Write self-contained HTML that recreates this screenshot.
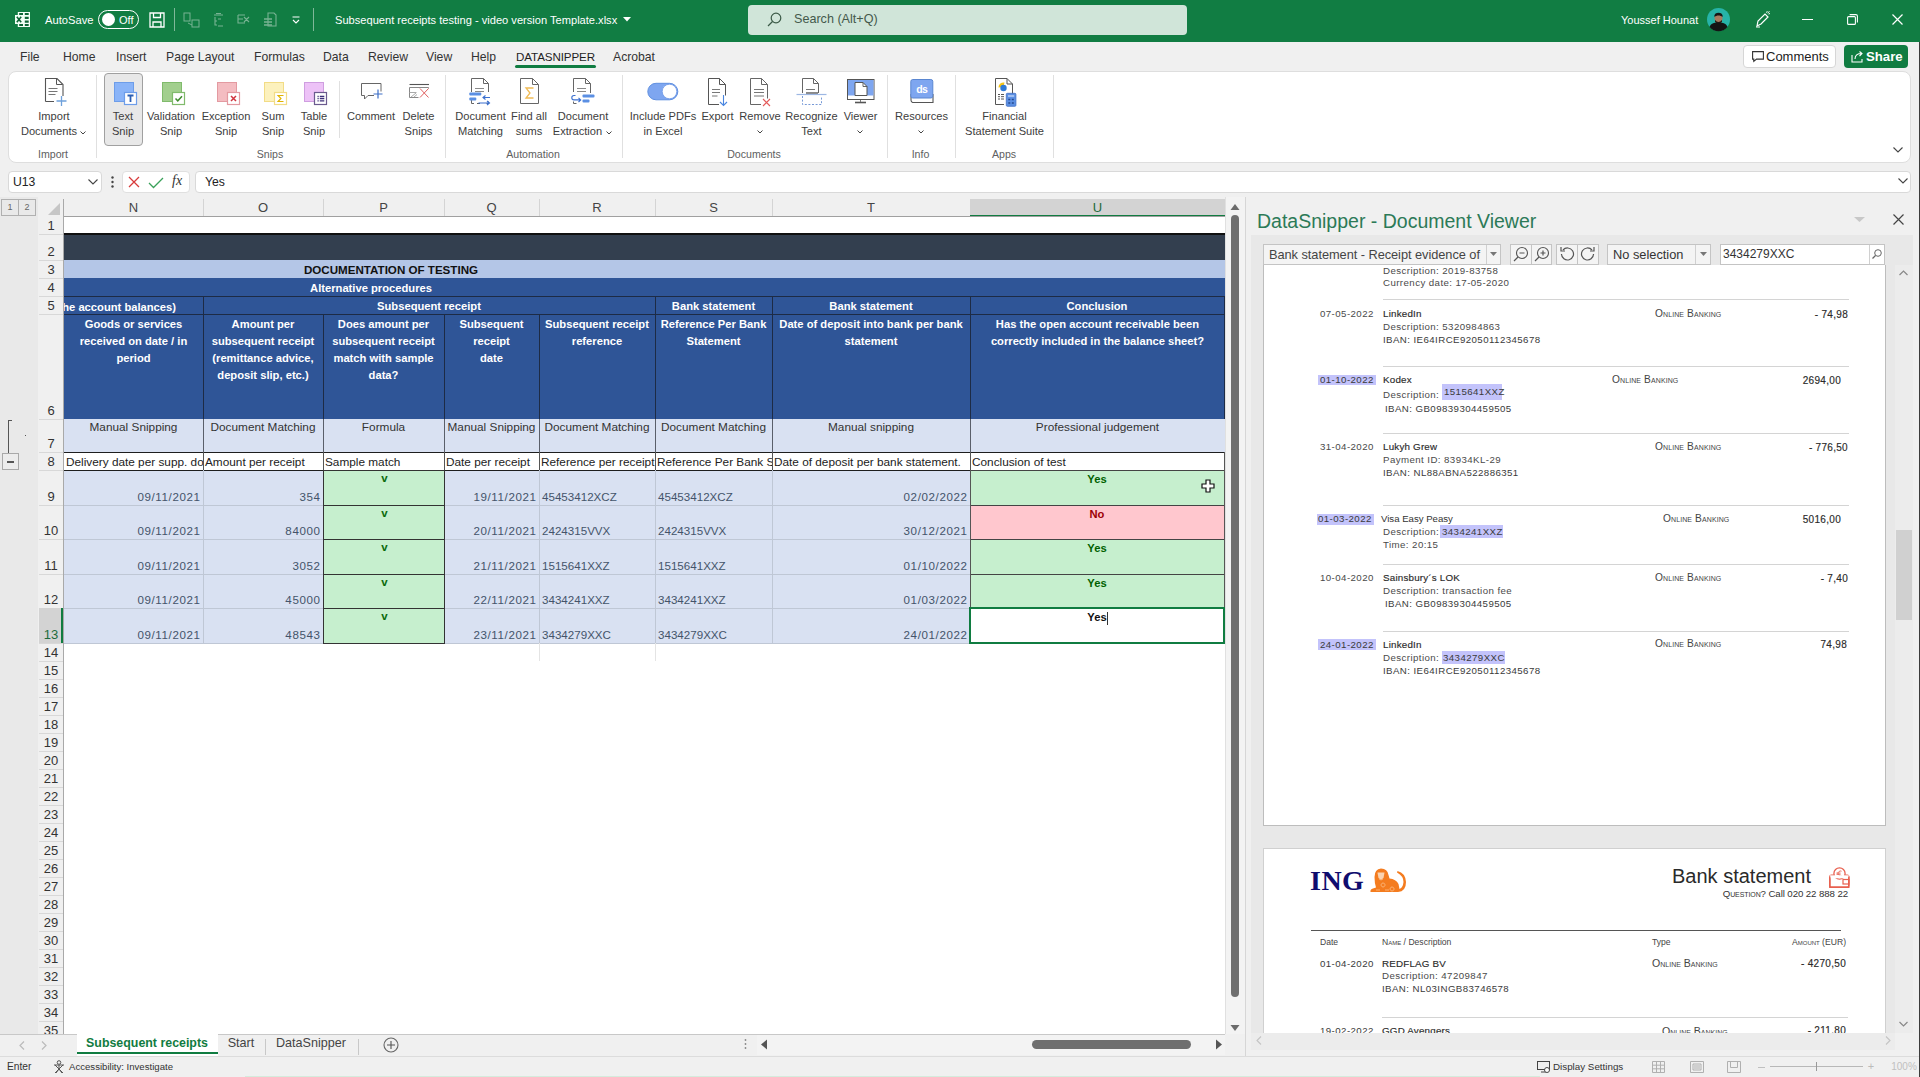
<!DOCTYPE html><html><head><meta charset="utf-8"><style>
*{margin:0;padding:0;box-sizing:border-box}
html,body{width:1920px;height:1077px;overflow:hidden;background:#f0f0f0;font-family:"Liberation Sans",sans-serif;color:#222}
.a{position:absolute}
.t{position:absolute;white-space:nowrap;line-height:1}
svg{position:absolute;overflow:visible}
</style></head><body>
<div class="a" style="left:0px;top:0px;width:1920px;height:42px;background:#117d43;"></div>
<svg style="left:14px;top:11px" width="17" height="17" viewBox="0 0 17 17"><rect x="3.8" y="1" width="12.2" height="15" fill="#f2fff6"/><path d="M5.2 3h3.8M10.8 3h3.9M10.8 6.8h3.9M10.8 10.6h3.9M5.2 14h3.8M10.8 14h3.9" stroke="#0d6536" stroke-width="2.2"/><path d="M1 4h9v9H1z" fill="#f2fff6"/><path d="M2.8 5.8l4.4 5.4M7.2 5.8l-4.4 5.4" stroke="#0d6536" stroke-width="1.6"/></svg>
<div class="t" style="left:45px;top:14.3px;height:13.4px;line-height:13.4px;font-size:11.2px;color:#fff;">AutoSave</div>
<div class="a" style="left:98px;top:10px;width:41px;height:19px;background:none;border:1.3px solid #fff;border-radius:10px"></div>
<div class="a" style="left:101.5px;top:13px;width:13px;height:13px;background:#fff;border-radius:50%"></div>
<div class="t" style="left:119px;top:13.9px;height:13.2px;line-height:13.2px;font-size:11px;color:#fff;">Off</div>
<svg style="left:149px;top:12px" width="16" height="16" viewBox="0 0 16 16"><path d="M1 1h14v14H1z" fill="none" stroke="#fff" stroke-width="1.3"/><path d="M4.5 1v4.5h7V1M4 15V10h8v5" fill="none" stroke="#fff" stroke-width="1.3"/></svg>
<div class="a" style="left:174px;top:8px;width:1px;height:23px;background:#7fb899;"></div>
<svg style="left:183px;top:12px" width="17" height="16" viewBox="0 0 17 16"><rect x="1" y="1" width="6" height="8" fill="none" stroke="#78b393"/><rect x="9" y="8" width="7" height="7" fill="none" stroke="#78b393"/><path d="M5 11l4 2" stroke="#78b393"/></svg>
<svg style="left:212px;top:12px" width="13" height="16" viewBox="0 0 13 16"><path d="M2 3h9M4 1.5h5M3 5v8h2M3 9h2M6 14h5M6 7h3" fill="none" stroke="#78b393" stroke-width="1.1"/></svg>
<svg style="left:237px;top:14px" width="13" height="10" viewBox="0 0 13 10"><path d="M1 1h7M1 1v8h7M1 5h5M7 3l5 5M12 3l-5 5" fill="none" stroke="#78b393" stroke-width="1.1"/></svg>
<svg style="left:263px;top:12px" width="14" height="16" viewBox="0 0 14 16"><path d="M5 1h6l2 2v11H5z" fill="none" stroke="#78b393" stroke-width="1.1"/><path d="M1 7h8M1 10h8M1 13h8" stroke="#78b393" stroke-width="1.6"/></svg>
<svg style="left:292px;top:16px" width="8" height="8" viewBox="0 0 8 8"><path d="M0.5 1h7M1 4l3 3 3-3" fill="none" stroke="#fff" stroke-width="1.1"/></svg>
<div class="a" style="left:313px;top:8px;width:1px;height:23px;background:#7fb899;"></div>
<div class="t" style="left:335px;top:14.3px;height:13.3px;line-height:13.3px;font-size:11.1px;color:#fff;">Subsequent receipts testing - video version Template.xlsx</div>
<svg style="left:623px;top:16.5px" width="8" height="5" viewBox="0 0 8 5"><path d="M0 0h8L4 4.5z" fill="#fff"/></svg>
<div class="a" style="left:748px;top:5px;width:439px;height:30px;background:#d0e5d9;border-radius:4px"></div>
<svg style="left:767px;top:12px" width="15" height="15" viewBox="0 0 15 15"><circle cx="9" cy="6" r="4.8" fill="none" stroke="#3b5a47" stroke-width="1.2"/><path d="M5.5 9.5L1 14" stroke="#3b5a47" stroke-width="1.3"/></svg>
<div class="t" style="left:794px;top:11.9px;height:15.1px;line-height:15.1px;font-size:12.6px;color:#44594b;">Search (Alt+Q)</div>
<div class="t" style="left:1621px;top:14.4px;height:13.2px;line-height:13.2px;font-size:11px;color:#fff;">Youssef Hounat</div>
<svg style="left:1707px;top:8px" width="23" height="23" viewBox="0 0 23 23"><circle cx="11.5" cy="11.5" r="11.5" fill="#27b3a8"/><ellipse cx="11.5" cy="10" rx="4" ry="5" fill="#a87a60"/><path d="M7.3 8c0-4.5 8.4-4.5 8.4 0l-.5 1c-1-2-6.4-2-7.4 0z" fill="#151515"/><path d="M8 12q3.5 4 7 0v2q-3.5 3-7 0z" fill="#2a1a14"/><path d="M2.5 19c1.5-3.5 4-4.5 9-4.5s7.5 1 9 4.5a11.5 11.5 0 0 1-18 0z" fill="#141414"/></svg>
<svg style="left:1755px;top:11px" width="16" height="17" viewBox="0 0 16 17"><path d="M2 15l1-5 7-7 3 3-7 7z" fill="none" stroke="#fff" stroke-width="1.2"/><path d="M1 16h4M11 1.5l1.5-1M13.5 3l1.5-.5M12.5 2l2-1.5" stroke="#fff" stroke-width="1"/></svg>
<div class="a" style="left:1802px;top:19px;width:11px;height:1px;background:#fff;"></div>
<svg style="left:1847px;top:14px" width="11" height="11" viewBox="0 0 11 11"><rect x="0.6" y="2.6" width="7.8" height="7.8" rx="1" fill="none" stroke="#fff" stroke-width="1.1"/><path d="M2.6 .6h6.3a1.5 1.5 0 0 1 1.5 1.5v6.3" fill="none" stroke="#fff" stroke-width="1.1"/></svg>
<svg style="left:1892px;top:14px" width="11" height="11" viewBox="0 0 11 11"><path d="M.5 .5l10 10M10.5 .5l-10 10" stroke="#fff" stroke-width="1.2"/></svg>
<div class="t" style="left:20px;top:49.7px;height:14.6px;line-height:14.6px;font-size:12.2px;color:#333;">File</div>
<div class="t" style="left:63px;top:49.7px;height:14.6px;line-height:14.6px;font-size:12.2px;color:#333;">Home</div>
<div class="t" style="left:116px;top:49.7px;height:14.6px;line-height:14.6px;font-size:12.2px;color:#333;">Insert</div>
<div class="t" style="left:166px;top:49.7px;height:14.6px;line-height:14.6px;font-size:12.2px;color:#333;">Page Layout</div>
<div class="t" style="left:254px;top:49.7px;height:14.6px;line-height:14.6px;font-size:12.2px;color:#333;">Formulas</div>
<div class="t" style="left:323px;top:49.7px;height:14.6px;line-height:14.6px;font-size:12.2px;color:#333;">Data</div>
<div class="t" style="left:368px;top:49.7px;height:14.6px;line-height:14.6px;font-size:12.2px;color:#333;">Review</div>
<div class="t" style="left:426px;top:49.7px;height:14.6px;line-height:14.6px;font-size:12.2px;color:#333;">View</div>
<div class="t" style="left:471px;top:49.7px;height:14.6px;line-height:14.6px;font-size:12.2px;color:#333;">Help</div>
<div class="t" style="left:516px;top:50.0px;height:13.9px;line-height:13.9px;font-size:11.6px;color:#1f1f1f;letter-spacing:-0.1px">DATASNIPPER</div>
<div class="a" style="left:515px;top:65px;width:81px;height:3px;background:#107c41;border-radius:2px"></div>
<div class="t" style="left:613px;top:49.7px;height:14.6px;line-height:14.6px;font-size:12.2px;color:#333;">Acrobat</div>
<div class="a" style="left:1743px;top:45px;width:93px;height:23px;background:#fff;border:1px solid #d6d6d6;border-radius:4px"></div>
<svg style="left:1752px;top:51px" width="12" height="11" viewBox="0 0 12 11"><path d="M.6.6h10.8v7.5H4.5L1.8 10.4V8.1H.6z" fill="none" stroke="#333" stroke-width="1.1"/></svg>
<div class="t" style="left:1766px;top:48.7px;height:15.6px;line-height:15.6px;font-size:13px;color:#222;">Comments</div>
<div class="a" style="left:1844px;top:45px;width:64px;height:23px;background:#107c41;border-radius:4px"></div>
<svg style="left:1851px;top:50px" width="13" height="13" viewBox="0 0 13 13"><path d="M1 5v7h10V9" fill="none" stroke="#fff" stroke-width="1.1"/><path d="M4 9c0-4 3-5.5 6.5-5.5M8.5 1.5l2.5 2-2.5 2.5" fill="none" stroke="#fff" stroke-width="1.1"/></svg>
<div class="t" style="left:1866px;top:48.6px;height:15.8px;line-height:15.8px;font-size:13.2px;color:#fff;font-weight:bold">Share</div>
<div class="a" style="left:8px;top:71px;width:1903px;height:92px;background:#fff;border:1px solid #dedede;border-radius:8px"></div>
<svg style="left:44px;top:78px" width="23" height="28" viewBox="0 0 23 28"><path d="M1.5 23.5V.5h11.5l6 6v11.5M1.5 23.5h8.5" fill="none" stroke="#555" stroke-width="1.1"/><path d="M12.5 .5v6h6" fill="none" stroke="#555" stroke-width="1"/><path d="M4.5 10.5h9M4.5 13.5h9M4.5 16.5h7" stroke="#777" stroke-width="1"/><path d="M17.5 18v10M12.5 23h10" stroke="#6fa1dc" stroke-width="1.3"/></svg>
<div class="t" style="left:-446px;width:1000px;text-align:center;top:110.3px;height:13.3px;line-height:13.3px;font-size:11.1px;color:#3d3d3d;">Import</div>
<div class="t" style="left:-451px;width:1000px;text-align:center;top:110.3px;height:13.3px;line-height:13.3px;font-size:11.1px;color:#3d3d3d;"></div>
<div class="t" style="left:-451px;width:1000px;text-align:center;top:125.3px;height:13.3px;line-height:13.3px;font-size:11.1px;color:#3d3d3d;">Documents</div>
<svg style="left:80px;top:131px" width="6" height="4" viewBox="0 0 6 4"><path d="M.5.5l2.5 2.5 2.5-2.5" fill="none" stroke="#444" stroke-width="1"/></svg>
<div class="t" style="left:-447px;width:1000px;text-align:center;top:148.1px;height:12.7px;line-height:12.7px;font-size:10.6px;color:#606060;">Import</div>
<div class="a" style="left:96px;top:75px;width:1px;height:83px;background:#e0e0e0;"></div>
<div class="a" style="left:104px;top:73px;width:39px;height:73px;background:#e8e8e8;border:1px solid #a0a0a0;border-radius:4px"></div>
<svg style="left:114px;top:82px" width="24" height="24" viewBox="0 0 24 24"><rect x=".5" y=".5" width="19" height="19" fill="#8ab4f8" stroke="#6d9de9" stroke-width="1"/><rect x="10.5" y="10.5" width="12" height="12" fill="#fff" stroke="#6d9de9" stroke-width="1.2"/><path d="M13.5 13.5h6M16.5 13.5v6.5" stroke="#2b5fb4" stroke-width="1.8"/></svg>
<div class="t" style="left:-377px;width:1000px;text-align:center;top:110.3px;height:13.3px;line-height:13.3px;font-size:11.1px;color:#3d3d3d;">Text</div>
<div class="t" style="left:-377px;width:1000px;text-align:center;top:125.3px;height:13.3px;line-height:13.3px;font-size:11.1px;color:#3d3d3d;">Snip</div>
<svg style="left:162px;top:82px" width="24" height="24" viewBox="0 0 24 24"><rect x=".5" y=".5" width="19" height="19" fill="#a2cf8e" stroke="#80bb6c" stroke-width="1"/><rect x="10.5" y="10.5" width="12" height="12" fill="#fff" stroke="#80bb6c" stroke-width="1.2"/><path d="M13.5 16.5l2.3 2.3 4.2-4.5" fill="none" stroke="#3f8b2d" stroke-width="1.5"/></svg>
<div class="t" style="left:-329px;width:1000px;text-align:center;top:110.3px;height:13.3px;line-height:13.3px;font-size:11.1px;color:#3d3d3d;">Validation</div>
<div class="t" style="left:-329px;width:1000px;text-align:center;top:125.3px;height:13.3px;line-height:13.3px;font-size:11.1px;color:#3d3d3d;">Snip</div>
<svg style="left:217px;top:82px" width="24" height="24" viewBox="0 0 24 24"><rect x=".5" y=".5" width="19" height="19" fill="#f4bcc1" stroke="#e39aa1" stroke-width="1"/><rect x="10.5" y="10.5" width="12" height="12" fill="#fff" stroke="#e39aa1" stroke-width="1.2"/><path d="M14 14l5 5M19 14l-5 5" stroke="#d0343f" stroke-width="1.5"/></svg>
<div class="t" style="left:-274px;width:1000px;text-align:center;top:110.3px;height:13.3px;line-height:13.3px;font-size:11.1px;color:#3d3d3d;">Exception</div>
<div class="t" style="left:-274px;width:1000px;text-align:center;top:125.3px;height:13.3px;line-height:13.3px;font-size:11.1px;color:#3d3d3d;">Snip</div>
<svg style="left:264px;top:82px" width="24" height="24" viewBox="0 0 24 24"><rect x=".5" y=".5" width="19" height="19" fill="#fcf1bd" stroke="#f2dc86" stroke-width="1"/><rect x="10.5" y="10.5" width="12" height="12" fill="#fff" stroke="#f2dc86" stroke-width="1.2"/><path d="M19.5 13.5h-5.5l3 3-3 3h5.5" fill="none" stroke="#e0b400" stroke-width="1.1"/></svg>
<div class="t" style="left:-227px;width:1000px;text-align:center;top:110.3px;height:13.3px;line-height:13.3px;font-size:11.1px;color:#3d3d3d;">Sum</div>
<div class="t" style="left:-227px;width:1000px;text-align:center;top:125.3px;height:13.3px;line-height:13.3px;font-size:11.1px;color:#3d3d3d;">Snip</div>
<svg style="left:304px;top:82px" width="24" height="24" viewBox="0 0 24 24"><rect x=".5" y=".5" width="19" height="19" fill="#edc2f7" stroke="#cf9ee0" stroke-width="1"/><rect x="10.5" y="10.5" width="12" height="12" fill="#fff" stroke="#6b5a8e" stroke-width="1.2"/><path d="M13.5 14.5h1.2M15.8 14.5h4.5M13.5 16.7h1.2M15.8 16.7h4.5M13.5 18.9h1.2M15.8 18.9h4.5" stroke="#3e2f7a" stroke-width="1.3"/></svg>
<div class="t" style="left:-186px;width:1000px;text-align:center;top:110.3px;height:13.3px;line-height:13.3px;font-size:11.1px;color:#3d3d3d;">Table</div>
<div class="t" style="left:-186px;width:1000px;text-align:center;top:125.3px;height:13.3px;line-height:13.3px;font-size:11.1px;color:#3d3d3d;">Snip</div>
<div class="t" style="left:-230px;width:1000px;text-align:center;top:148.1px;height:12.7px;line-height:12.7px;font-size:10.6px;color:#606060;">Snips</div>
<div class="a" style="left:339px;top:81px;width:1px;height:57px;background:#e0e0e0;"></div>
<svg style="left:361px;top:83px" width="23" height="17" viewBox="0 0 23 17"><path d="M13 12.5H7l-3.5 3.5v-3.5H.5V.5h19.5v8" fill="none" stroke="#666" stroke-width="1"/><path d="M17 6.5v9M12.5 11h9" stroke="#3d6fc8" stroke-width="1.2"/></svg>
<div class="t" style="left:-129px;width:1000px;text-align:center;top:110.3px;height:13.3px;line-height:13.3px;font-size:11.1px;color:#3d3d3d;">Comment</div>
<svg style="left:409px;top:83px" width="21" height="16" viewBox="0 0 21 16"><path d="M.5 1.5h19.5" stroke="#555" stroke-width="1.1"/><path d="M.5 4.5h19v1M.5 4.5v10h9" fill="none" stroke="#888" stroke-width="1"/><path d="M.5 9.5h7M2 14l5-4M5 14l3-2.5" stroke="#aaa" stroke-width="1"/><path d="M11 5.5l8.5 9M19.5 5.5l-8.5 9" stroke="#e06060" stroke-width="1"/></svg>
<div class="t" style="left:-81.5px;width:1000px;text-align:center;top:110.3px;height:13.3px;line-height:13.3px;font-size:11.1px;color:#3d3d3d;">Delete</div>
<div class="t" style="left:-81.5px;width:1000px;text-align:center;top:125.3px;height:13.3px;line-height:13.3px;font-size:11.1px;color:#3d3d3d;">Snips</div>
<div class="a" style="left:445px;top:75px;width:1px;height:83px;background:#e0e0e0;"></div>
<svg style="left:469px;top:78px" width="22" height="27" viewBox="0 0 22 27"><path d="M2.5 14V.5h12l5 5V14M19.5 23.5v2h-2M2.5 22v3.5h2.5M8 25.5h3" fill="none" stroke="#666" stroke-width="1"/><path d="M14.5 .5v5h5" fill="none" stroke="#666" stroke-width="1"/><path d="M6 10.5h9M6 13.5h9" stroke="#8a8a8a" stroke-width="1"/><rect x=".3" y="14.5" width="12" height="3" rx="1" fill="#5b8fe3"/><rect x=".3" y="19.5" width="7" height="3" rx="1" fill="#5b8fe3"/><path d="M21 19.5h-7M16.5 17.5l-2.5 2 2.5 2M9.5 25h11M18 23l2.5 2-2.5 2" fill="none" stroke="#3a6fcf" stroke-width="1.1"/></svg>
<div class="t" style="left:-19.5px;width:1000px;text-align:center;top:110.3px;height:13.3px;line-height:13.3px;font-size:11.1px;color:#3d3d3d;">Document</div>
<div class="t" style="left:-19.5px;width:1000px;text-align:center;top:125.3px;height:13.3px;line-height:13.3px;font-size:11.1px;color:#3d3d3d;">Matching</div>
<svg style="left:519px;top:78px" width="21" height="27" viewBox="0 0 21 27"><path d="M1.5 25.5V.5h12l6 6v19z M13.5 .5v6h6" fill="#fff" stroke="#666" stroke-width="1"/><path d="M14.5 10h-7.5l4 5-4 5h7.5" fill="none" stroke="#f0bb55" stroke-width="1.3"/></svg>
<div class="t" style="left:29px;width:1000px;text-align:center;top:110.3px;height:13.3px;line-height:13.3px;font-size:11.1px;color:#3d3d3d;">Find all</div>
<div class="t" style="left:29px;width:1000px;text-align:center;top:125.3px;height:13.3px;line-height:13.3px;font-size:11.1px;color:#3d3d3d;">sums</div>
<svg style="left:571px;top:78px" width="25" height="27" viewBox="0 0 25 27"><path d="M2.5 14V.5h12l5 5V15M2.5 23.5v2h3" fill="none" stroke="#666" stroke-width="1"/><path d="M14.5 .5v5h5" fill="none" stroke="#666" stroke-width="1"/><path d="M6 10.5h9M6 13.5h9" stroke="#8a8a8a" stroke-width="1"/><rect x="11.5" y="16.5" width="12" height="3" rx="1" fill="#5b8fe3"/><rect x="11.5" y="21.5" width="7" height="3" rx="1" fill="#5b8fe3"/><path d="M4.5 17.5h-1.5a2.2 2.2 0 0 0 0 4.4h6.5M7.5 19.8l2.2 2.1-2.2 2.1" fill="none" stroke="#3a6fcf" stroke-width="1.1"/></svg>
<div class="t" style="left:83px;width:1000px;text-align:center;top:110.3px;height:13.3px;line-height:13.3px;font-size:11.1px;color:#3d3d3d;">Document</div>
<div class="t" style="left:77.5px;width:1000px;text-align:center;top:110.3px;height:13.3px;line-height:13.3px;font-size:11.1px;color:#3d3d3d;"></div>
<div class="t" style="left:77.5px;width:1000px;text-align:center;top:125.3px;height:13.3px;line-height:13.3px;font-size:11.1px;color:#3d3d3d;">Extraction</div>
<svg style="left:606px;top:131px" width="6" height="4" viewBox="0 0 6 4"><path d="M.5.5l2.5 2.5 2.5-2.5" fill="none" stroke="#444" stroke-width="1"/></svg>
<div class="t" style="left:33px;width:1000px;text-align:center;top:148.1px;height:12.7px;line-height:12.7px;font-size:10.6px;color:#606060;">Automation</div>
<div class="a" style="left:622px;top:75px;width:1px;height:83px;background:#e0e0e0;"></div>
<svg style="left:647px;top:82px" width="32" height="19" viewBox="0 0 32 19"><rect x=".8" y="1.3" width="30" height="16.5" rx="8.25" fill="#7ea6f0" stroke="#5f8fe0" stroke-width="1"/><circle cx="22.5" cy="9.5" r="7.3" fill="#fff" stroke="#6d98e6" stroke-width=".8"/></svg>
<div class="t" style="left:163px;width:1000px;text-align:center;top:110.3px;height:13.3px;line-height:13.3px;font-size:11.1px;color:#3d3d3d;">Include PDFs</div>
<div class="t" style="left:163px;width:1000px;text-align:center;top:125.3px;height:13.3px;line-height:13.3px;font-size:11.1px;color:#3d3d3d;">in Excel</div>
<svg style="left:707px;top:78px" width="22" height="29" viewBox="0 0 22 29"><path d="M12 26.5H1.5V.5h11l6 6v11" fill="none" stroke="#555" stroke-width="1"/><path d="M12.5 .5v6h6" fill="none" stroke="#555" stroke-width="1"/><path d="M5 11.5h8M5 14.5h8M5 18h5.5" stroke="#777" stroke-width="1"/><path d="M16.5 17v10.5M13 24l3.5 3.5 3.5-3.5" fill="none" stroke="#4a86e0" stroke-width="1.1"/></svg>
<div class="t" style="left:217.5px;width:1000px;text-align:center;top:110.3px;height:13.3px;line-height:13.3px;font-size:11.1px;color:#3d3d3d;">Export</div>
<svg style="left:749px;top:78px" width="23" height="29" viewBox="0 0 23 29"><path d="M12 26.5H1.5V.5h11l6 6v14" fill="none" stroke="#666" stroke-width="1"/><path d="M12.5 .5v6h6" fill="none" stroke="#666" stroke-width="1"/><path d="M5 11.5h10M5 14.5h10M5 18h10" stroke="#777" stroke-width="1"/><path d="M14 21l7 7M21 21l-7 7" stroke="#e45b5b" stroke-width="1.1"/></svg>
<div class="t" style="left:260px;width:1000px;text-align:center;top:110.3px;height:13.3px;line-height:13.3px;font-size:11.1px;color:#3d3d3d;">Remove</div>
<svg style="left:757px;top:130px" width="6" height="4" viewBox="0 0 6 4"><path d="M.5.5l2.5 2.5 2.5-2.5" fill="none" stroke="#444" stroke-width="1"/></svg>
<svg style="left:796px;top:78px" width="32" height="28" viewBox="0 0 32 28"><path d="M6.5 15V.5h11l5 5V15" fill="none" stroke="#666" stroke-width="1"/><path d="M17.5 .5v5h5" fill="none" stroke="#666" stroke-width="1"/><path d="M10 11.5h9" stroke="#777" stroke-width="1"/><rect x="10" y="14" width="12" height="2" fill="#8a8a8a"/><path d="M.5 16.5h30" stroke="#9db7e3" stroke-width="1.2"/><path d="M6.5 18v8.5h19V18" fill="none" stroke="#7799d6" stroke-width="1" stroke-dasharray="2 1.6"/></svg>
<div class="t" style="left:311.5px;width:1000px;text-align:center;top:110.3px;height:13.3px;line-height:13.3px;font-size:11.1px;color:#3d3d3d;">Recognize</div>
<div class="t" style="left:311.5px;width:1000px;text-align:center;top:125.3px;height:13.3px;line-height:13.3px;font-size:11.1px;color:#3d3d3d;">Text</div>
<svg style="left:847px;top:79px" width="28" height="26" viewBox="0 0 28 26"><rect x=".5" y=".5" width="26.5" height="20" fill="#fff" stroke="#555" stroke-width="1"/><rect x="1" y="1" width="25.5" height="15.5" fill="#7ea6f0"/><path d="M8 3.5h8l4 4v9H8z" fill="#fff" stroke="#555" stroke-width="1"/><path d="M16 3.5v4h4" fill="none" stroke="#555" stroke-width=".9"/><path d="M8 23.5h11" stroke="#555" stroke-width="1.6"/><path d="M13.5 21v2" stroke="#777" stroke-width="1"/></svg>
<div class="t" style="left:360.5px;width:1000px;text-align:center;top:110.3px;height:13.3px;line-height:13.3px;font-size:11.1px;color:#3d3d3d;">Viewer</div>
<svg style="left:857px;top:130px" width="6" height="4" viewBox="0 0 6 4"><path d="M.5.5l2.5 2.5 2.5-2.5" fill="none" stroke="#444" stroke-width="1"/></svg>
<div class="t" style="left:254px;width:1000px;text-align:center;top:148.1px;height:12.7px;line-height:12.7px;font-size:10.6px;color:#606060;">Documents</div>
<div class="a" style="left:887px;top:75px;width:1px;height:83px;background:#e0e0e0;"></div>
<svg style="left:910px;top:79px" width="24" height="25" viewBox="0 0 24 25"><path d="M1 15v6a2.5 2.5 0 0 0 2.5 2.5h19.5V15" fill="#fff" stroke="#555" stroke-width="1.1"/><rect x=".8" y=".5" width="22" height="18.5" rx="2" fill="#7ea6f0" stroke="#5a86d0" stroke-width="1"/><text x="11.8" y="13.5" font-size="10.5" fill="#fff" text-anchor="middle" font-family="Liberation Sans" font-weight="bold" letter-spacing="-.5">ds</text></svg>
<div class="t" style="left:421.5px;width:1000px;text-align:center;top:110.3px;height:13.3px;line-height:13.3px;font-size:11.1px;color:#3d3d3d;">Resources</div>
<svg style="left:918px;top:130px" width="6" height="4" viewBox="0 0 6 4"><path d="M.5.5l2.5 2.5 2.5-2.5" fill="none" stroke="#444" stroke-width="1"/></svg>
<div class="t" style="left:420.5px;width:1000px;text-align:center;top:148.1px;height:12.7px;line-height:12.7px;font-size:10.6px;color:#606060;">Info</div>
<div class="a" style="left:955px;top:75px;width:1px;height:83px;background:#e0e0e0;"></div>
<svg style="left:994px;top:78px" width="23" height="29" viewBox="0 0 23 29"><path d="M10 26.5H1.5V.5h11.5l5.5 5.5v10.5M13 .5v5.5h5.5" fill="#fff" stroke="#555" stroke-width="1"/><path d="M4.5 9.5a5 5 0 0 1 6-5l-1 4.5z" fill="#f5c518"/><circle cx="9.5" cy="10" r="3.2" fill="#2f7ad6"/><path d="M4 16.5h2M7 16.5h3M4 18.7h2M7 18.7h3M4 21h2M7 21h3" stroke="#555" stroke-width="1"/><rect x="12.3" y="15.3" width="9.6" height="13" rx="1" fill="#5b8fe3" stroke="#3f6fc4" stroke-width=".8"/><path d="M14 18h6.2" stroke="#cfe0fb" stroke-width="1.2"/><path d="M14.3 21.5h2M17.8 21.5h2M14.3 25h2M17.8 25h2" stroke="#24498f" stroke-width="1.4"/></svg>
<div class="t" style="left:504.5px;width:1000px;text-align:center;top:110.3px;height:13.3px;line-height:13.3px;font-size:11.1px;color:#3d3d3d;">Financial</div>
<div class="t" style="left:504.5px;width:1000px;text-align:center;top:125.3px;height:13.3px;line-height:13.3px;font-size:11.1px;color:#3d3d3d;">Statement Suite</div>
<div class="t" style="left:504px;width:1000px;text-align:center;top:148.1px;height:12.7px;line-height:12.7px;font-size:10.6px;color:#606060;">Apps</div>
<div class="a" style="left:1053px;top:75px;width:1px;height:83px;background:#e0e0e0;"></div>
<svg style="left:1893px;top:147px" width="10" height="6" viewBox="0 0 10 6"><path d="M.5.5l4.5 4.5 4.5-4.5" fill="none" stroke="#444" stroke-width="1.1"/></svg>
<div class="a" style="left:8px;top:171px;width:94px;height:22px;background:#fff;border:1px solid #d9d9d9;border-radius:4px"></div>
<div class="t" style="left:13px;top:174.7px;height:14.6px;line-height:14.6px;font-size:12.2px;color:#222;">U13</div>
<svg style="left:88px;top:179px" width="10" height="6" viewBox="0 0 10 6"><path d="M.5.5l4.5 4.5 4.5-4.5" fill="none" stroke="#444" stroke-width="1.1"/></svg>
<svg style="left:111px;top:176px" width="3" height="12" viewBox="0 0 3 12"><circle cx="1.5" cy="1.5" r="1.2" fill="#444"/><circle cx="1.5" cy="6" r="1.2" fill="#444"/><circle cx="1.5" cy="10.5" r="1.2" fill="#444"/></svg>
<div class="a" style="left:122px;top:171px;width:68px;height:22px;background:#fff;border:1px solid #e0e0e0;border-radius:4px"></div>
<svg style="left:128px;top:176px" width="12" height="12" viewBox="0 0 12 12"><path d="M1 1l10 10M11 1L1 11" stroke="#d83b3b" stroke-width="1.3"/></svg>
<svg style="left:148px;top:177px" width="16" height="11" viewBox="0 0 16 11"><path d="M1 6l4.5 4.5L15 1" fill="none" stroke="#3aa15a" stroke-width="1.3"/></svg>
<div class="t" style="left:172px;top:173.1px;height:16.8px;line-height:16.8px;font-size:14px;color:#333;font-family:'Liberation Serif',serif"><i>fx</i></div>
<div class="a" style="left:195px;top:171px;width:1716px;height:22px;background:#fff;border:1px solid #d9d9d9;border-radius:4px"></div>
<div class="t" style="left:205px;top:174.7px;height:14.6px;line-height:14.6px;font-size:12.2px;color:#222;">Yes</div>
<svg style="left:1898px;top:178px" width="10" height="6" viewBox="0 0 10 6"><path d="M.5.5l4.5 4.5 4.5-4.5" fill="none" stroke="#444" stroke-width="1.1"/></svg>
<div class="a" style="left:64px;top:216px;width:1161px;height:818px;background:#fff;"></div>
<div class="a" style="left:39px;top:197px;width:1186px;height:19px;background:#f0f0f0;"></div>
<div class="t" style="left:-366.5px;width:1000px;text-align:center;top:199.7px;height:15.6px;line-height:15.6px;font-size:13px;color:#444;">N</div>
<div class="a" style="left:203px;top:199px;width:1px;height:17px;background:#d4d4d4;"></div>
<div class="t" style="left:-237.0px;width:1000px;text-align:center;top:199.7px;height:15.6px;line-height:15.6px;font-size:13px;color:#444;">O</div>
<div class="a" style="left:323px;top:199px;width:1px;height:17px;background:#d4d4d4;"></div>
<div class="t" style="left:-116.5px;width:1000px;text-align:center;top:199.7px;height:15.6px;line-height:15.6px;font-size:13px;color:#444;">P</div>
<div class="a" style="left:444px;top:199px;width:1px;height:17px;background:#d4d4d4;"></div>
<div class="t" style="left:-8.5px;width:1000px;text-align:center;top:199.7px;height:15.6px;line-height:15.6px;font-size:13px;color:#444;">Q</div>
<div class="a" style="left:539px;top:199px;width:1px;height:17px;background:#d4d4d4;"></div>
<div class="t" style="left:97.0px;width:1000px;text-align:center;top:199.7px;height:15.6px;line-height:15.6px;font-size:13px;color:#444;">R</div>
<div class="a" style="left:655px;top:199px;width:1px;height:17px;background:#d4d4d4;"></div>
<div class="t" style="left:213.5px;width:1000px;text-align:center;top:199.7px;height:15.6px;line-height:15.6px;font-size:13px;color:#444;">S</div>
<div class="a" style="left:772px;top:199px;width:1px;height:17px;background:#d4d4d4;"></div>
<div class="t" style="left:371.0px;width:1000px;text-align:center;top:199.7px;height:15.6px;line-height:15.6px;font-size:13px;color:#444;">T</div>
<div class="a" style="left:970px;top:199px;width:1px;height:17px;background:#d4d4d4;"></div>
<div class="a" style="left:970px;top:199px;width:255px;height:17px;background:#d3d3d3;"></div>
<div class="a" style="left:970px;top:215px;width:255px;height:2px;background:#107c41;"></div>
<div class="t" style="left:597.5px;width:1000px;text-align:center;top:199.7px;height:15.6px;line-height:15.6px;font-size:13px;color:#1e6b3c;">U</div>
<div class="a" style="left:1225px;top:199px;width:1px;height:17px;background:#d4d4d4;"></div>
<div class="a" style="left:39px;top:216px;width:1186px;height:1px;background:#a0a0a0;"></div>
<svg style="left:48px;top:203px" width="12" height="12" viewBox="0 0 12 12"><path d="M12 0v12H0z" fill="#c6c6c6"/></svg>
<div class="a" style="left:39px;top:216px;width:25px;height:818px;background:#f0f0f0;"></div>
<div class="a" style="left:63px;top:199px;width:1px;height:835px;background:#a9a9a9;"></div>
<div class="a" style="left:39px;top:234px;width:24px;height:1px;background:#d8d8d8;"></div>
<div class="t" style="left:-449px;width:1000px;text-align:center;top:217.7px;height:15.6px;line-height:15.6px;font-size:13px;color:#333;">1</div>
<div class="a" style="left:39px;top:260px;width:24px;height:1px;background:#d8d8d8;"></div>
<div class="t" style="left:-449px;width:1000px;text-align:center;top:243.7px;height:15.6px;line-height:15.6px;font-size:13px;color:#333;">2</div>
<div class="a" style="left:39px;top:278px;width:24px;height:1px;background:#d8d8d8;"></div>
<div class="t" style="left:-449px;width:1000px;text-align:center;top:261.7px;height:15.6px;line-height:15.6px;font-size:13px;color:#333;">3</div>
<div class="a" style="left:39px;top:296px;width:24px;height:1px;background:#d8d8d8;"></div>
<div class="t" style="left:-449px;width:1000px;text-align:center;top:279.7px;height:15.6px;line-height:15.6px;font-size:13px;color:#333;">4</div>
<div class="a" style="left:39px;top:314px;width:24px;height:1px;background:#d8d8d8;"></div>
<div class="t" style="left:-449px;width:1000px;text-align:center;top:297.7px;height:15.6px;line-height:15.6px;font-size:13px;color:#333;">5</div>
<div class="a" style="left:39px;top:419px;width:24px;height:1px;background:#d8d8d8;"></div>
<div class="t" style="left:-449px;width:1000px;text-align:center;top:402.7px;height:15.6px;line-height:15.6px;font-size:13px;color:#333;">6</div>
<div class="a" style="left:39px;top:452px;width:24px;height:1px;background:#d8d8d8;"></div>
<div class="t" style="left:-449px;width:1000px;text-align:center;top:435.7px;height:15.6px;line-height:15.6px;font-size:13px;color:#333;">7</div>
<div class="a" style="left:39px;top:470px;width:24px;height:1px;background:#d8d8d8;"></div>
<div class="t" style="left:-449px;width:1000px;text-align:center;top:453.7px;height:15.6px;line-height:15.6px;font-size:13px;color:#333;">8</div>
<div class="a" style="left:39px;top:505px;width:24px;height:1px;background:#d8d8d8;"></div>
<div class="t" style="left:-449px;width:1000px;text-align:center;top:488.7px;height:15.6px;line-height:15.6px;font-size:13px;color:#333;">9</div>
<div class="a" style="left:39px;top:539px;width:24px;height:1px;background:#d8d8d8;"></div>
<div class="t" style="left:-449px;width:1000px;text-align:center;top:522.7px;height:15.6px;line-height:15.6px;font-size:13px;color:#333;">10</div>
<div class="a" style="left:39px;top:574px;width:24px;height:1px;background:#d8d8d8;"></div>
<div class="t" style="left:-449px;width:1000px;text-align:center;top:557.7px;height:15.6px;line-height:15.6px;font-size:13px;color:#333;">11</div>
<div class="a" style="left:39px;top:608px;width:24px;height:1px;background:#d8d8d8;"></div>
<div class="t" style="left:-449px;width:1000px;text-align:center;top:591.7px;height:15.6px;line-height:15.6px;font-size:13px;color:#333;">12</div>
<div class="a" style="left:39px;top:608px;width:24px;height:35px;background:#d3d3d3;"></div>
<div class="a" style="left:61px;top:608px;width:2px;height:35px;background:#107c41;"></div>
<div class="a" style="left:39px;top:643px;width:24px;height:1px;background:#d8d8d8;"></div>
<div class="t" style="left:-449px;width:1000px;text-align:center;top:626.7px;height:15.6px;line-height:15.6px;font-size:13px;color:#1e6b3c;">13</div>
<div class="a" style="left:39px;top:661px;width:24px;height:1px;background:#d8d8d8;"></div>
<div class="t" style="left:-449px;width:1000px;text-align:center;top:644.7px;height:15.6px;line-height:15.6px;font-size:13px;color:#333;">14</div>
<div class="a" style="left:39px;top:679px;width:24px;height:1px;background:#d8d8d8;"></div>
<div class="t" style="left:-449px;width:1000px;text-align:center;top:662.7px;height:15.6px;line-height:15.6px;font-size:13px;color:#333;">15</div>
<div class="a" style="left:39px;top:697px;width:24px;height:1px;background:#d8d8d8;"></div>
<div class="t" style="left:-449px;width:1000px;text-align:center;top:680.7px;height:15.6px;line-height:15.6px;font-size:13px;color:#333;">16</div>
<div class="a" style="left:39px;top:715px;width:24px;height:1px;background:#d8d8d8;"></div>
<div class="t" style="left:-449px;width:1000px;text-align:center;top:698.7px;height:15.6px;line-height:15.6px;font-size:13px;color:#333;">17</div>
<div class="a" style="left:39px;top:733px;width:24px;height:1px;background:#d8d8d8;"></div>
<div class="t" style="left:-449px;width:1000px;text-align:center;top:716.7px;height:15.6px;line-height:15.6px;font-size:13px;color:#333;">18</div>
<div class="a" style="left:39px;top:751px;width:24px;height:1px;background:#d8d8d8;"></div>
<div class="t" style="left:-449px;width:1000px;text-align:center;top:734.7px;height:15.6px;line-height:15.6px;font-size:13px;color:#333;">19</div>
<div class="a" style="left:39px;top:769px;width:24px;height:1px;background:#d8d8d8;"></div>
<div class="t" style="left:-449px;width:1000px;text-align:center;top:752.7px;height:15.6px;line-height:15.6px;font-size:13px;color:#333;">20</div>
<div class="a" style="left:39px;top:787px;width:24px;height:1px;background:#d8d8d8;"></div>
<div class="t" style="left:-449px;width:1000px;text-align:center;top:770.7px;height:15.6px;line-height:15.6px;font-size:13px;color:#333;">21</div>
<div class="a" style="left:39px;top:805px;width:24px;height:1px;background:#d8d8d8;"></div>
<div class="t" style="left:-449px;width:1000px;text-align:center;top:788.7px;height:15.6px;line-height:15.6px;font-size:13px;color:#333;">22</div>
<div class="a" style="left:39px;top:823px;width:24px;height:1px;background:#d8d8d8;"></div>
<div class="t" style="left:-449px;width:1000px;text-align:center;top:806.7px;height:15.6px;line-height:15.6px;font-size:13px;color:#333;">23</div>
<div class="a" style="left:39px;top:841px;width:24px;height:1px;background:#d8d8d8;"></div>
<div class="t" style="left:-449px;width:1000px;text-align:center;top:824.7px;height:15.6px;line-height:15.6px;font-size:13px;color:#333;">24</div>
<div class="a" style="left:39px;top:859px;width:24px;height:1px;background:#d8d8d8;"></div>
<div class="t" style="left:-449px;width:1000px;text-align:center;top:842.7px;height:15.6px;line-height:15.6px;font-size:13px;color:#333;">25</div>
<div class="a" style="left:39px;top:877px;width:24px;height:1px;background:#d8d8d8;"></div>
<div class="t" style="left:-449px;width:1000px;text-align:center;top:860.7px;height:15.6px;line-height:15.6px;font-size:13px;color:#333;">26</div>
<div class="a" style="left:39px;top:895px;width:24px;height:1px;background:#d8d8d8;"></div>
<div class="t" style="left:-449px;width:1000px;text-align:center;top:878.7px;height:15.6px;line-height:15.6px;font-size:13px;color:#333;">27</div>
<div class="a" style="left:39px;top:913px;width:24px;height:1px;background:#d8d8d8;"></div>
<div class="t" style="left:-449px;width:1000px;text-align:center;top:896.7px;height:15.6px;line-height:15.6px;font-size:13px;color:#333;">28</div>
<div class="a" style="left:39px;top:931px;width:24px;height:1px;background:#d8d8d8;"></div>
<div class="t" style="left:-449px;width:1000px;text-align:center;top:914.7px;height:15.6px;line-height:15.6px;font-size:13px;color:#333;">29</div>
<div class="a" style="left:39px;top:949px;width:24px;height:1px;background:#d8d8d8;"></div>
<div class="t" style="left:-449px;width:1000px;text-align:center;top:932.7px;height:15.6px;line-height:15.6px;font-size:13px;color:#333;">30</div>
<div class="a" style="left:39px;top:967px;width:24px;height:1px;background:#d8d8d8;"></div>
<div class="t" style="left:-449px;width:1000px;text-align:center;top:950.7px;height:15.6px;line-height:15.6px;font-size:13px;color:#333;">31</div>
<div class="a" style="left:39px;top:985px;width:24px;height:1px;background:#d8d8d8;"></div>
<div class="t" style="left:-449px;width:1000px;text-align:center;top:968.7px;height:15.6px;line-height:15.6px;font-size:13px;color:#333;">32</div>
<div class="a" style="left:39px;top:1003px;width:24px;height:1px;background:#d8d8d8;"></div>
<div class="t" style="left:-449px;width:1000px;text-align:center;top:986.7px;height:15.6px;line-height:15.6px;font-size:13px;color:#333;">33</div>
<div class="a" style="left:39px;top:1021px;width:24px;height:1px;background:#d8d8d8;"></div>
<div class="t" style="left:-449px;width:1000px;text-align:center;top:1004.7px;height:15.6px;line-height:15.6px;font-size:13px;color:#333;">34</div>
<div class="t" style="left:-449px;width:1000px;text-align:center;top:1022.7px;height:15.6px;line-height:15.6px;font-size:13px;color:#333;">35</div>
<div class="a" style="left:0px;top:197px;width:38px;height:837px;background:#e9e9e9;"></div>
<div class="a" style="left:1px;top:199px;width:18px;height:17px;background:#e9e9e9;border:1px solid #b0b0b0"></div>
<div class="a" style="left:18px;top:199px;width:18px;height:17px;background:#e9e9e9;border:1px solid #b0b0b0"></div>
<div class="t" style="left:-490px;width:1000px;text-align:center;top:202.1px;height:10.8px;line-height:10.8px;font-size:9px;color:#666;">1</div>
<div class="t" style="left:-473px;width:1000px;text-align:center;top:202.1px;height:10.8px;line-height:10.8px;font-size:9px;color:#666;">2</div>
<div class="a" style="left:8px;top:420px;width:1px;height:33px;background:#555;"></div>
<div class="a" style="left:8px;top:420px;width:4px;height:1px;background:#555;"></div>
<div class="a" style="left:10px;top:455px;width:1px;height:0px;background:#555;"></div>
<div class="a" style="left:25px;top:435px;width:1px;height:1px;background:#555;"></div>
<div class="a" style="left:2px;top:453px;width:17px;height:17px;background:#ececec;border:1px solid #a9a9a9"></div>
<div class="a" style="left:7px;top:461px;width:7px;height:2px;background:#555;"></div>
<div class="a" style="left:64px;top:233px;width:1161px;height:2px;background:#111;"></div>
<div class="a" style="left:64px;top:235px;width:1161px;height:25px;background:#333f4f;"></div>
<div class="a" style="left:64px;top:260px;width:1161px;height:18px;background:#b4c6e7;"></div>
<div class="t" style="left:-109px;width:1000px;text-align:center;top:263.0px;height:13.9px;line-height:13.9px;font-size:11.6px;color:#111;font-weight:bold;">DOCUMENTATION OF TESTING</div>
<div class="a" style="left:64px;top:278px;width:1161px;height:18px;background:#2f5597;"></div>
<div class="t" style="left:-129px;width:1000px;text-align:center;top:281.8px;height:13.4px;line-height:13.4px;font-size:11.2px;color:#fff;font-weight:bold;">Alternative procedures</div>
<div class="a" style="left:64px;top:296px;width:1161px;height:123px;background:#2f5597;"></div>
<div class="a" style="left:64px;top:296px;width:1161px;height:1px;background:#1d2b45;"></div>
<div class="a" style="left:64px;top:314px;width:1161px;height:1px;background:#1d2b45;"></div>
<div class="a" style="left:203px;top:296px;width:1px;height:18px;background:#1d2b45;"></div>
<div class="a" style="left:655px;top:296px;width:1px;height:18px;background:#1d2b45;"></div>
<div class="a" style="left:772px;top:296px;width:1px;height:18px;background:#1d2b45;"></div>
<div class="a" style="left:970px;top:296px;width:1px;height:18px;background:#1d2b45;"></div>
<div class="a" style="left:203px;top:314px;width:1px;height:105px;background:#1d2b45;"></div>
<div class="a" style="left:323px;top:314px;width:1px;height:105px;background:#1d2b45;"></div>
<div class="a" style="left:444px;top:314px;width:1px;height:105px;background:#1d2b45;"></div>
<div class="a" style="left:539px;top:314px;width:1px;height:105px;background:#1d2b45;"></div>
<div class="a" style="left:655px;top:314px;width:1px;height:105px;background:#1d2b45;"></div>
<div class="a" style="left:772px;top:314px;width:1px;height:105px;background:#1d2b45;"></div>
<div class="a" style="left:970px;top:314px;width:1px;height:105px;background:#1d2b45;"></div>
<div class="a" style="left:1224px;top:296px;width:1px;height:123px;background:#1d2b45;"></div>
<div class="a" style="left:64px;top:296px;width:139px;height:18px;overflow:hidden"><div class="t" style="right:27px;top:1.5px;line-height:18px;font-size:11.2px;font-weight:bold;color:#fff">(exclude the account balances)</div></div><div class="t" style="left:-71px;width:1000px;text-align:center;top:299.8px;height:13.4px;line-height:13.4px;font-size:11.2px;color:#fff;font-weight:bold;">Subsequent receipt</div>
<div class="t" style="left:213.5px;width:1000px;text-align:center;top:299.8px;height:13.4px;line-height:13.4px;font-size:11.2px;color:#fff;font-weight:bold;">Bank statement</div>
<div class="t" style="left:371px;width:1000px;text-align:center;top:299.8px;height:13.4px;line-height:13.4px;font-size:11.2px;color:#fff;font-weight:bold;">Bank statement</div>
<div class="t" style="left:597px;width:1000px;text-align:center;top:299.8px;height:13.4px;line-height:13.4px;font-size:11.2px;color:#fff;font-weight:bold;">Conclusion</div>
<div class="t" style="left:-366.5px;width:1000px;text-align:center;top:318.3px;height:13.4px;line-height:13.4px;font-size:11.2px;color:#fff;font-weight:bold;">Goods or services</div>
<div class="t" style="left:-366.5px;width:1000px;text-align:center;top:335.2px;height:13.4px;line-height:13.4px;font-size:11.2px;color:#fff;font-weight:bold;">received on date / in</div>
<div class="t" style="left:-366.5px;width:1000px;text-align:center;top:352.1px;height:13.4px;line-height:13.4px;font-size:11.2px;color:#fff;font-weight:bold;">period</div>
<div class="t" style="left:-237.0px;width:1000px;text-align:center;top:318.3px;height:13.4px;line-height:13.4px;font-size:11.2px;color:#fff;font-weight:bold;">Amount per</div>
<div class="t" style="left:-237.0px;width:1000px;text-align:center;top:335.2px;height:13.4px;line-height:13.4px;font-size:11.2px;color:#fff;font-weight:bold;">subsequent receipt</div>
<div class="t" style="left:-237.0px;width:1000px;text-align:center;top:352.1px;height:13.4px;line-height:13.4px;font-size:11.2px;color:#fff;font-weight:bold;">(remittance advice,</div>
<div class="t" style="left:-237.0px;width:1000px;text-align:center;top:369.0px;height:13.4px;line-height:13.4px;font-size:11.2px;color:#fff;font-weight:bold;">deposit slip, etc.)</div>
<div class="t" style="left:-116.5px;width:1000px;text-align:center;top:318.3px;height:13.4px;line-height:13.4px;font-size:11.2px;color:#fff;font-weight:bold;">Does amount per</div>
<div class="t" style="left:-116.5px;width:1000px;text-align:center;top:335.2px;height:13.4px;line-height:13.4px;font-size:11.2px;color:#fff;font-weight:bold;">subsequent receipt</div>
<div class="t" style="left:-116.5px;width:1000px;text-align:center;top:352.1px;height:13.4px;line-height:13.4px;font-size:11.2px;color:#fff;font-weight:bold;">match with sample</div>
<div class="t" style="left:-116.5px;width:1000px;text-align:center;top:369.0px;height:13.4px;line-height:13.4px;font-size:11.2px;color:#fff;font-weight:bold;">data?</div>
<div class="t" style="left:-8.5px;width:1000px;text-align:center;top:318.3px;height:13.4px;line-height:13.4px;font-size:11.2px;color:#fff;font-weight:bold;">Subsequent</div>
<div class="t" style="left:-8.5px;width:1000px;text-align:center;top:335.2px;height:13.4px;line-height:13.4px;font-size:11.2px;color:#fff;font-weight:bold;">receipt</div>
<div class="t" style="left:-8.5px;width:1000px;text-align:center;top:352.1px;height:13.4px;line-height:13.4px;font-size:11.2px;color:#fff;font-weight:bold;">date</div>
<div class="t" style="left:97.0px;width:1000px;text-align:center;top:318.3px;height:13.4px;line-height:13.4px;font-size:11.2px;color:#fff;font-weight:bold;">Subsequent receipt</div>
<div class="t" style="left:97.0px;width:1000px;text-align:center;top:335.2px;height:13.4px;line-height:13.4px;font-size:11.2px;color:#fff;font-weight:bold;">reference</div>
<div class="t" style="left:213.5px;width:1000px;text-align:center;top:318.3px;height:13.4px;line-height:13.4px;font-size:11.2px;color:#fff;font-weight:bold;">Reference Per Bank</div>
<div class="t" style="left:213.5px;width:1000px;text-align:center;top:335.2px;height:13.4px;line-height:13.4px;font-size:11.2px;color:#fff;font-weight:bold;">Statement</div>
<div class="t" style="left:371.0px;width:1000px;text-align:center;top:318.3px;height:13.4px;line-height:13.4px;font-size:11.2px;color:#fff;font-weight:bold;">Date of deposit into bank per bank</div>
<div class="t" style="left:371.0px;width:1000px;text-align:center;top:335.2px;height:13.4px;line-height:13.4px;font-size:11.2px;color:#fff;font-weight:bold;">statement</div>
<div class="t" style="left:597.5px;width:1000px;text-align:center;top:318.3px;height:13.4px;line-height:13.4px;font-size:11.2px;color:#fff;font-weight:bold;">Has the open account receivable been</div>
<div class="t" style="left:597.5px;width:1000px;text-align:center;top:335.2px;height:13.4px;line-height:13.4px;font-size:11.2px;color:#fff;font-weight:bold;">correctly included in the balance sheet?</div>
<div class="a" style="left:64px;top:419px;width:1161px;height:33px;background:#d9e1f2;"></div>
<div class="a" style="left:203px;top:419px;width:1px;height:33px;background:#5a5f6a;"></div>
<div class="a" style="left:323px;top:419px;width:1px;height:33px;background:#5a5f6a;"></div>
<div class="a" style="left:444px;top:419px;width:1px;height:33px;background:#5a5f6a;"></div>
<div class="a" style="left:539px;top:419px;width:1px;height:33px;background:#5a5f6a;"></div>
<div class="a" style="left:655px;top:419px;width:1px;height:33px;background:#5a5f6a;"></div>
<div class="a" style="left:772px;top:419px;width:1px;height:33px;background:#5a5f6a;"></div>
<div class="a" style="left:970px;top:419px;width:1px;height:33px;background:#5a5f6a;"></div>
<div class="t" style="left:-366.5px;width:1000px;text-align:center;top:420.4px;height:14.2px;line-height:14.2px;font-size:11.8px;color:#333;">Manual Snipping</div>
<div class="t" style="left:-237.0px;width:1000px;text-align:center;top:420.4px;height:14.2px;line-height:14.2px;font-size:11.8px;color:#333;">Document Matching</div>
<div class="t" style="left:-116.5px;width:1000px;text-align:center;top:420.4px;height:14.2px;line-height:14.2px;font-size:11.8px;color:#333;">Formula</div>
<div class="t" style="left:-8.5px;width:1000px;text-align:center;top:420.4px;height:14.2px;line-height:14.2px;font-size:11.8px;color:#333;">Manual Snipping</div>
<div class="t" style="left:97.0px;width:1000px;text-align:center;top:420.4px;height:14.2px;line-height:14.2px;font-size:11.8px;color:#333;">Document Matching</div>
<div class="t" style="left:213.5px;width:1000px;text-align:center;top:420.4px;height:14.2px;line-height:14.2px;font-size:11.8px;color:#333;">Document Matching</div>
<div class="t" style="left:371.0px;width:1000px;text-align:center;top:420.4px;height:14.2px;line-height:14.2px;font-size:11.8px;color:#333;">Manual snipping</div>
<div class="t" style="left:597.5px;width:1000px;text-align:center;top:420.4px;height:14.2px;line-height:14.2px;font-size:11.8px;color:#333;">Professional judgement</div>
<div class="a" style="left:64px;top:452px;width:1161px;height:18px;background:#fff;"></div>
<div class="a" style="left:64px;top:452px;width:1161px;height:1px;background:#1e1e1e;"></div>
<div class="a" style="left:64px;top:470px;width:1161px;height:1px;background:#1e1e1e;"></div>
<div class="a" style="left:203px;top:452px;width:1px;height:18px;background:#555;"></div>
<div class="a" style="left:323px;top:452px;width:1px;height:18px;background:#555;"></div>
<div class="a" style="left:444px;top:452px;width:1px;height:18px;background:#555;"></div>
<div class="a" style="left:539px;top:452px;width:1px;height:18px;background:#555;"></div>
<div class="a" style="left:655px;top:452px;width:1px;height:18px;background:#555;"></div>
<div class="a" style="left:772px;top:452px;width:1px;height:18px;background:#555;"></div>
<div class="a" style="left:970px;top:452px;width:1px;height:18px;background:#555;"></div>
<div class="a" style="left:1224px;top:452px;width:1px;height:18px;background:#555;"></div>
<div class="a" style="left:65px;top:453px;width:138px;height:16px;overflow:hidden"><div class="t" style="left:1px;top:1.9px;height:14.2px;line-height:14.2px;font-size:11.8px;color:#222;">Delivery date per supp. do</div>
</div><div class="a" style="left:204px;top:453px;width:119px;height:16px;overflow:hidden"><div class="t" style="left:1px;top:1.9px;height:14.2px;line-height:14.2px;font-size:11.8px;color:#222;">Amount per receipt</div>
</div><div class="a" style="left:324px;top:453px;width:120px;height:16px;overflow:hidden"><div class="t" style="left:1px;top:1.9px;height:14.2px;line-height:14.2px;font-size:11.8px;color:#222;">Sample match</div>
</div><div class="a" style="left:445px;top:453px;width:94px;height:16px;overflow:hidden"><div class="t" style="left:1px;top:1.9px;height:14.2px;line-height:14.2px;font-size:11.8px;color:#222;">Date per receipt</div>
</div><div class="a" style="left:540px;top:453px;width:115px;height:16px;overflow:hidden"><div class="t" style="left:1px;top:1.9px;height:14.2px;line-height:14.2px;font-size:11.8px;color:#222;">Reference per receipt</div>
</div><div class="a" style="left:656px;top:453px;width:116px;height:16px;overflow:hidden"><div class="t" style="left:1px;top:1.9px;height:14.2px;line-height:14.2px;font-size:11.8px;color:#222;">Reference Per Bank Statement</div>
</div><div class="a" style="left:773px;top:453px;width:197px;height:16px;overflow:hidden"><div class="t" style="left:1px;top:1.9px;height:14.2px;line-height:14.2px;font-size:11.8px;color:#222;">Date of deposit per bank statement.</div>
</div><div class="a" style="left:971px;top:453px;width:254px;height:16px;overflow:hidden"><div class="t" style="left:1px;top:1.9px;height:14.2px;line-height:14.2px;font-size:11.8px;color:#222;">Conclusion of test</div>
</div><div class="a" style="left:64px;top:471px;width:906px;height:172px;background:#d9e1f2;"></div>
<div class="a" style="left:64px;top:505px;width:906px;height:1px;background:#bfc7d5;"></div>
<div class="a" style="left:203px;top:470px;width:1px;height:35px;background:#bfc7d5;"></div>
<div class="a" style="left:323px;top:470px;width:1px;height:35px;background:#bfc7d5;"></div>
<div class="a" style="left:444px;top:470px;width:1px;height:35px;background:#bfc7d5;"></div>
<div class="a" style="left:539px;top:470px;width:1px;height:35px;background:#bfc7d5;"></div>
<div class="a" style="left:655px;top:470px;width:1px;height:35px;background:#bfc7d5;"></div>
<div class="a" style="left:772px;top:470px;width:1px;height:35px;background:#bfc7d5;"></div>
<div class="t" style="right:1720px;text-align:right;top:490.4px;height:13.9px;line-height:13.9px;font-size:11.6px;color:#44546a;letter-spacing:.6px;margin-right:-.6px">09/11/2021</div>
<div class="t" style="right:1600px;text-align:right;top:490.4px;height:13.9px;line-height:13.9px;font-size:11.6px;color:#44546a;letter-spacing:.6px;margin-right:-.6px">354</div>
<div class="t" style="right:1384px;text-align:right;top:490.4px;height:13.9px;line-height:13.9px;font-size:11.6px;color:#44546a;letter-spacing:.6px;margin-right:-.6px">19/11/2021</div>
<div class="t" style="left:542px;top:490.4px;height:13.9px;line-height:13.9px;font-size:11.6px;color:#44546a;">45453412XCZ</div>
<div class="t" style="left:658px;top:490.4px;height:13.9px;line-height:13.9px;font-size:11.6px;color:#44546a;">45453412XCZ</div>
<div class="t" style="right:953px;text-align:right;top:490.4px;height:13.9px;line-height:13.9px;font-size:11.6px;color:#44546a;letter-spacing:.6px;margin-right:-.6px">02/02/2022</div>
<div class="a" style="left:323px;top:470px;width:121px;height:35px;background:#c6efce;"></div>
<div class="t" style="left:-115.5px;width:1000px;text-align:center;top:472.1px;height:13.8px;line-height:13.8px;font-size:11.5px;color:#0b6a0b;font-weight:bold;">v</div>
<div class="a" style="left:970px;top:470px;width:255px;height:35px;background:#c6efce;"></div>
<div class="t" style="left:597px;width:1000px;text-align:center;top:472.8px;height:13.4px;line-height:13.4px;font-size:11.2px;color:#006100;font-weight:bold;">Yes</div>
<div class="a" style="left:64px;top:539px;width:906px;height:1px;background:#bfc7d5;"></div>
<div class="a" style="left:203px;top:505px;width:1px;height:34px;background:#bfc7d5;"></div>
<div class="a" style="left:323px;top:505px;width:1px;height:34px;background:#bfc7d5;"></div>
<div class="a" style="left:444px;top:505px;width:1px;height:34px;background:#bfc7d5;"></div>
<div class="a" style="left:539px;top:505px;width:1px;height:34px;background:#bfc7d5;"></div>
<div class="a" style="left:655px;top:505px;width:1px;height:34px;background:#bfc7d5;"></div>
<div class="a" style="left:772px;top:505px;width:1px;height:34px;background:#bfc7d5;"></div>
<div class="t" style="right:1720px;text-align:right;top:524.4px;height:13.9px;line-height:13.9px;font-size:11.6px;color:#44546a;letter-spacing:.6px;margin-right:-.6px">09/11/2021</div>
<div class="t" style="right:1600px;text-align:right;top:524.4px;height:13.9px;line-height:13.9px;font-size:11.6px;color:#44546a;letter-spacing:.6px;margin-right:-.6px">84000</div>
<div class="t" style="right:1384px;text-align:right;top:524.4px;height:13.9px;line-height:13.9px;font-size:11.6px;color:#44546a;letter-spacing:.6px;margin-right:-.6px">20/11/2021</div>
<div class="t" style="left:542px;top:524.4px;height:13.9px;line-height:13.9px;font-size:11.6px;color:#44546a;">2424315VVX</div>
<div class="t" style="left:658px;top:524.4px;height:13.9px;line-height:13.9px;font-size:11.6px;color:#44546a;">2424315VVX</div>
<div class="t" style="right:953px;text-align:right;top:524.4px;height:13.9px;line-height:13.9px;font-size:11.6px;color:#44546a;letter-spacing:.6px;margin-right:-.6px">30/12/2021</div>
<div class="a" style="left:323px;top:505px;width:121px;height:34px;background:#c6efce;"></div>
<div class="t" style="left:-115.5px;width:1000px;text-align:center;top:507.1px;height:13.8px;line-height:13.8px;font-size:11.5px;color:#0b6a0b;font-weight:bold;">v</div>
<div class="a" style="left:970px;top:505px;width:255px;height:34px;background:#ffc7ce;"></div>
<div class="t" style="left:597px;width:1000px;text-align:center;top:507.8px;height:13.4px;line-height:13.4px;font-size:11.2px;color:#9c0006;font-weight:bold;">No</div>
<div class="a" style="left:64px;top:574px;width:906px;height:1px;background:#bfc7d5;"></div>
<div class="a" style="left:203px;top:539px;width:1px;height:35px;background:#bfc7d5;"></div>
<div class="a" style="left:323px;top:539px;width:1px;height:35px;background:#bfc7d5;"></div>
<div class="a" style="left:444px;top:539px;width:1px;height:35px;background:#bfc7d5;"></div>
<div class="a" style="left:539px;top:539px;width:1px;height:35px;background:#bfc7d5;"></div>
<div class="a" style="left:655px;top:539px;width:1px;height:35px;background:#bfc7d5;"></div>
<div class="a" style="left:772px;top:539px;width:1px;height:35px;background:#bfc7d5;"></div>
<div class="t" style="right:1720px;text-align:right;top:559.4px;height:13.9px;line-height:13.9px;font-size:11.6px;color:#44546a;letter-spacing:.6px;margin-right:-.6px">09/11/2021</div>
<div class="t" style="right:1600px;text-align:right;top:559.4px;height:13.9px;line-height:13.9px;font-size:11.6px;color:#44546a;letter-spacing:.6px;margin-right:-.6px">3052</div>
<div class="t" style="right:1384px;text-align:right;top:559.4px;height:13.9px;line-height:13.9px;font-size:11.6px;color:#44546a;letter-spacing:.6px;margin-right:-.6px">21/11/2021</div>
<div class="t" style="left:542px;top:559.4px;height:13.9px;line-height:13.9px;font-size:11.6px;color:#44546a;">1515641XXZ</div>
<div class="t" style="left:658px;top:559.4px;height:13.9px;line-height:13.9px;font-size:11.6px;color:#44546a;">1515641XXZ</div>
<div class="t" style="right:953px;text-align:right;top:559.4px;height:13.9px;line-height:13.9px;font-size:11.6px;color:#44546a;letter-spacing:.6px;margin-right:-.6px">01/10/2022</div>
<div class="a" style="left:323px;top:539px;width:121px;height:35px;background:#c6efce;"></div>
<div class="t" style="left:-115.5px;width:1000px;text-align:center;top:541.1px;height:13.8px;line-height:13.8px;font-size:11.5px;color:#0b6a0b;font-weight:bold;">v</div>
<div class="a" style="left:970px;top:539px;width:255px;height:35px;background:#c6efce;"></div>
<div class="t" style="left:597px;width:1000px;text-align:center;top:541.8px;height:13.4px;line-height:13.4px;font-size:11.2px;color:#006100;font-weight:bold;">Yes</div>
<div class="a" style="left:64px;top:608px;width:906px;height:1px;background:#bfc7d5;"></div>
<div class="a" style="left:203px;top:574px;width:1px;height:34px;background:#bfc7d5;"></div>
<div class="a" style="left:323px;top:574px;width:1px;height:34px;background:#bfc7d5;"></div>
<div class="a" style="left:444px;top:574px;width:1px;height:34px;background:#bfc7d5;"></div>
<div class="a" style="left:539px;top:574px;width:1px;height:34px;background:#bfc7d5;"></div>
<div class="a" style="left:655px;top:574px;width:1px;height:34px;background:#bfc7d5;"></div>
<div class="a" style="left:772px;top:574px;width:1px;height:34px;background:#bfc7d5;"></div>
<div class="t" style="right:1720px;text-align:right;top:593.4px;height:13.9px;line-height:13.9px;font-size:11.6px;color:#44546a;letter-spacing:.6px;margin-right:-.6px">09/11/2021</div>
<div class="t" style="right:1600px;text-align:right;top:593.4px;height:13.9px;line-height:13.9px;font-size:11.6px;color:#44546a;letter-spacing:.6px;margin-right:-.6px">45000</div>
<div class="t" style="right:1384px;text-align:right;top:593.4px;height:13.9px;line-height:13.9px;font-size:11.6px;color:#44546a;letter-spacing:.6px;margin-right:-.6px">22/11/2021</div>
<div class="t" style="left:542px;top:593.4px;height:13.9px;line-height:13.9px;font-size:11.6px;color:#44546a;">3434241XXZ</div>
<div class="t" style="left:658px;top:593.4px;height:13.9px;line-height:13.9px;font-size:11.6px;color:#44546a;">3434241XXZ</div>
<div class="t" style="right:953px;text-align:right;top:593.4px;height:13.9px;line-height:13.9px;font-size:11.6px;color:#44546a;letter-spacing:.6px;margin-right:-.6px">01/03/2022</div>
<div class="a" style="left:323px;top:574px;width:121px;height:34px;background:#c6efce;"></div>
<div class="t" style="left:-115.5px;width:1000px;text-align:center;top:576.1px;height:13.8px;line-height:13.8px;font-size:11.5px;color:#0b6a0b;font-weight:bold;">v</div>
<div class="a" style="left:970px;top:574px;width:255px;height:34px;background:#c6efce;"></div>
<div class="t" style="left:597px;width:1000px;text-align:center;top:576.8px;height:13.4px;line-height:13.4px;font-size:11.2px;color:#006100;font-weight:bold;">Yes</div>
<div class="a" style="left:64px;top:643px;width:906px;height:1px;background:#bfc7d5;"></div>
<div class="a" style="left:203px;top:608px;width:1px;height:35px;background:#bfc7d5;"></div>
<div class="a" style="left:323px;top:608px;width:1px;height:35px;background:#bfc7d5;"></div>
<div class="a" style="left:444px;top:608px;width:1px;height:35px;background:#bfc7d5;"></div>
<div class="a" style="left:539px;top:608px;width:1px;height:35px;background:#bfc7d5;"></div>
<div class="a" style="left:655px;top:608px;width:1px;height:35px;background:#bfc7d5;"></div>
<div class="a" style="left:772px;top:608px;width:1px;height:35px;background:#bfc7d5;"></div>
<div class="t" style="right:1720px;text-align:right;top:628.4px;height:13.9px;line-height:13.9px;font-size:11.6px;color:#44546a;letter-spacing:.6px;margin-right:-.6px">09/11/2021</div>
<div class="t" style="right:1600px;text-align:right;top:628.4px;height:13.9px;line-height:13.9px;font-size:11.6px;color:#44546a;letter-spacing:.6px;margin-right:-.6px">48543</div>
<div class="t" style="right:1384px;text-align:right;top:628.4px;height:13.9px;line-height:13.9px;font-size:11.6px;color:#44546a;letter-spacing:.6px;margin-right:-.6px">23/11/2021</div>
<div class="t" style="left:542px;top:628.4px;height:13.9px;line-height:13.9px;font-size:11.6px;color:#44546a;">3434279XXC</div>
<div class="t" style="left:658px;top:628.4px;height:13.9px;line-height:13.9px;font-size:11.6px;color:#44546a;">3434279XXC</div>
<div class="t" style="right:953px;text-align:right;top:628.4px;height:13.9px;line-height:13.9px;font-size:11.6px;color:#44546a;letter-spacing:.6px;margin-right:-.6px">24/01/2022</div>
<div class="a" style="left:323px;top:608px;width:121px;height:35px;background:#c6efce;"></div>
<div class="t" style="left:-115.5px;width:1000px;text-align:center;top:610.1px;height:13.8px;line-height:13.8px;font-size:11.5px;color:#0b6a0b;font-weight:bold;">v</div>
<div class="a" style="left:970px;top:608px;width:255px;height:35px;background:#fff;"></div>
<div class="t" style="left:597px;width:1000px;text-align:center;top:611.3px;height:13.4px;line-height:13.4px;font-size:11.2px;color:#111;font-weight:bold;">Yes</div>
<div class="a" style="left:323px;top:470px;width:122px;height:1px;background:#333;"></div>
<div class="a" style="left:970px;top:470px;width:255px;height:1px;background:#444;"></div>
<div class="a" style="left:323px;top:505px;width:122px;height:1px;background:#333;"></div>
<div class="a" style="left:970px;top:505px;width:255px;height:1px;background:#444;"></div>
<div class="a" style="left:323px;top:539px;width:122px;height:1px;background:#333;"></div>
<div class="a" style="left:970px;top:539px;width:255px;height:1px;background:#444;"></div>
<div class="a" style="left:323px;top:574px;width:122px;height:1px;background:#333;"></div>
<div class="a" style="left:970px;top:574px;width:255px;height:1px;background:#444;"></div>
<div class="a" style="left:323px;top:608px;width:122px;height:1px;background:#333;"></div>
<div class="a" style="left:970px;top:608px;width:255px;height:1px;background:#444;"></div>
<div class="a" style="left:323px;top:643px;width:122px;height:1px;background:#333;"></div>
<div class="a" style="left:323px;top:470px;width:1px;height:173px;background:#333;"></div>
<div class="a" style="left:444px;top:470px;width:1px;height:173px;background:#333;"></div>
<div class="a" style="left:970px;top:470px;width:1px;height:138px;background:#555;"></div>
<div class="a" style="left:1224px;top:470px;width:1px;height:138px;background:#555;"></div>
<div class="a" style="left:969px;top:607px;width:256px;height:37px;background:none;border:2px solid #107c41"></div>
<div class="a" style="left:1107px;top:612px;width:1px;height:13px;background:#333;"></div>
<svg style="left:1201px;top:479px" width="14" height="14" viewBox="0 0 14 14"><path d="M5 1h4v4h4v4H9v4H5V9H1V5h4z" fill="#fff" stroke="#111" stroke-width="1.2"/></svg>
<div class="a" style="left:539px;top:643px;width:1px;height:18px;background:#e4e4e4;"></div>
<div class="a" style="left:655px;top:643px;width:1px;height:18px;background:#e4e4e4;"></div>
<div class="a" style="left:1225px;top:197px;width:20px;height:837px;background:#f3f3f3;"></div>
<div class="a" style="left:1225px;top:197px;width:1px;height:837px;background:#e0e0e0;"></div>
<svg style="left:1230px;top:203px" width="10" height="8" viewBox="0 0 10 8"><path d="M5 1L9.5 7H.5z" fill="#6b6b6b"/></svg>
<div class="a" style="left:1231px;top:215px;width:8px;height:782px;background:#6f6f6f;border-radius:4px"></div>
<svg style="left:1230px;top:1024px" width="10" height="8" viewBox="0 0 10 8"><path d="M5 7L9.5 1H.5z" fill="#6b6b6b"/></svg>
<div class="a" style="left:0px;top:1034px;width:1245px;height:22px;background:#f0f0f0;"></div>
<div class="a" style="left:0px;top:1034px;width:1225px;height:1px;background:#c8c8c8;"></div>
<svg style="left:19px;top:1041px" width="6" height="9" viewBox="0 0 6 9"><path d="M5 .5L1 4.5 5 8.5" fill="none" stroke="#bbb" stroke-width="1.2"/></svg>
<svg style="left:41px;top:1041px" width="6" height="9" viewBox="0 0 6 9"><path d="M1 .5L5 4.5 1 8.5" fill="none" stroke="#bbb" stroke-width="1.2"/></svg>
<div class="a" style="left:77px;top:1034px;width:141px;height:22px;background:#fff;"></div>
<div class="a" style="left:77px;top:1052px;width:141px;height:2px;background:#107c41;"></div>
<div class="t" style="left:-353px;width:1000px;text-align:center;top:1035.6px;height:14.9px;line-height:14.9px;font-size:12.4px;color:#107c41;font-weight:bold;">Subsequent receipts</div>
<div class="t" style="left:-259px;width:1000px;text-align:center;top:1036.4px;height:15.1px;line-height:15.1px;font-size:12.6px;color:#444;">Start</div>
<div class="a" style="left:265px;top:1039px;width:1px;height:16px;background:#c8c8c8;"></div>
<div class="t" style="left:-189px;width:1000px;text-align:center;top:1036.4px;height:15.1px;line-height:15.1px;font-size:12.6px;color:#444;">DataSnipper</div>
<div class="a" style="left:358px;top:1039px;width:1px;height:16px;background:#c8c8c8;"></div>
<svg style="left:383px;top:1037px" width="16" height="16" viewBox="0 0 16 16"><circle cx="8" cy="8" r="7" fill="none" stroke="#666" stroke-width="1.1"/><path d="M8 4v8M4 8h8" stroke="#555" stroke-width="1.1"/></svg>
<svg style="left:744px;top:1039px" width="3" height="11" viewBox="0 0 3 11"><circle cx="1.5" cy="1" r=".9" fill="#888"/><circle cx="1.5" cy="5" r=".9" fill="#888"/><circle cx="1.5" cy="9" r=".9" fill="#888"/></svg>
<div class="a" style="left:757px;top:1035px;width:468px;height:20px;background:#f3f3f3;"></div>
<svg style="left:760px;top:1039px" width="8" height="11" viewBox="0 0 8 11"><path d="M7 .5v10L1 5.5z" fill="#555"/></svg>
<div class="a" style="left:1032px;top:1040px;width:159px;height:9px;background:#6f6f6f;border-radius:4.5px"></div>
<svg style="left:1215px;top:1039px" width="8" height="11" viewBox="0 0 8 11"><path d="M1 .5v10L7 5.5z" fill="#555"/></svg>
<div class="a" style="left:1245px;top:197px;width:675px;height:859px;background:#f0f0f0;"></div>
<div class="a" style="left:1245px;top:197px;width:1px;height:859px;background:#d6d6d6;"></div>
<div class="t" style="left:1257px;top:210.3px;height:23.4px;line-height:23.4px;font-size:19.5px;color:#2c7a57;">DataSnipper - Document Viewer</div>
<svg style="left:1854px;top:217px" width="11" height="5" viewBox="0 0 11 5"><path d="M0 0h11L5.5 5z" fill="#c8c8c8"/></svg>
<svg style="left:1893px;top:214px" width="11" height="11" viewBox="0 0 11 11"><path d="M.5 .5l10 10M10.5 .5l-10 10" stroke="#444" stroke-width="1.2"/></svg>
<div class="a" style="left:1251px;top:235px;width:662px;height:798px;background:#e8e8e8;"></div>
<div class="a" style="left:1263px;top:244px;width:238px;height:21px;background:#f4f4f4;border:1px solid #c4c4c4"></div>
<div class="t" style="left:1269px;top:246.8px;height:15.4px;line-height:15.4px;font-size:12.8px;color:#444;letter-spacing:-0.05px">Bank statement - Receipt evidence of</div>
<div class="a" style="left:1486px;top:245px;width:1px;height:19px;background:#d0d0d0;"></div>
<svg style="left:1490px;top:252px" width="7" height="4" viewBox="0 0 7 4"><path d="M0 0h7L3.5 4z" fill="#777"/></svg>
<div class="a" style="left:1510px;top:244px;width:22px;height:21px;background:#f4f4f4;border:1px solid #c4c4c4"></div>
<div class="a" style="left:1531px;top:244px;width:21px;height:21px;background:#f4f4f4;border:1px solid #c4c4c4"></div>
<div class="a" style="left:1556px;top:244px;width:22px;height:21px;background:#f4f4f4;border:1px solid #c4c4c4"></div>
<div class="a" style="left:1577px;top:244px;width:22px;height:21px;background:#f4f4f4;border:1px solid #c4c4c4"></div>
<svg style="left:1513px;top:246px" width="16" height="16" viewBox="0 0 16 16"><circle cx="9" cy="7" r="5.5" fill="none" stroke="#555" stroke-width="1.1"/><path d="M5 11l-4 4M6.5 7h5" stroke="#555" stroke-width="1.2"/></svg>
<svg style="left:1534px;top:246px" width="16" height="16" viewBox="0 0 16 16"><circle cx="9" cy="7" r="5.5" fill="none" stroke="#555" stroke-width="1.1"/><path d="M5 11l-4 4M6.5 7h5M9 4.5v5" stroke="#555" stroke-width="1.2"/></svg>
<svg style="left:1559px;top:246px" width="16" height="16" viewBox="0 0 16 16"><path d="M4 4a6 6 0 1 1-1.5 4" fill="none" stroke="#555" stroke-width="1.2"/><path d="M2 1v4h4" fill="none" stroke="#555" stroke-width="1.2"/></svg>
<svg style="left:1580px;top:246px" width="16" height="16" viewBox="0 0 16 16"><path d="M12 4a6 6 0 1 0 1.5 4" fill="none" stroke="#555" stroke-width="1.2"/><path d="M14 1v4h-4" fill="none" stroke="#555" stroke-width="1.2"/></svg>
<div class="a" style="left:1607px;top:244px;width:104px;height:21px;background:#f4f4f4;border:1px solid #c4c4c4"></div>
<div class="t" style="left:1613px;top:246.8px;height:15.4px;line-height:15.4px;font-size:12.8px;color:#333;">No selection</div>
<div class="a" style="left:1695px;top:245px;width:1px;height:19px;background:#d0d0d0;"></div>
<svg style="left:1700px;top:252px" width="7" height="4" viewBox="0 0 7 4"><path d="M0 0h7L3.5 4z" fill="#777"/></svg>
<div class="a" style="left:1720px;top:244px;width:165px;height:21px;background:#fff;border:1px solid #c4c4c4"></div>
<div class="t" style="left:1723px;top:247.3px;height:14.4px;line-height:14.4px;font-size:12px;color:#333;">3434279XXC</div>
<div class="a" style="left:1869px;top:245px;width:1px;height:19px;background:#d0d0d0;"></div>
<svg style="left:1871px;top:248px" width="12" height="12" viewBox="0 0 12 12"><circle cx="7" cy="5" r="3.3" fill="none" stroke="#666" stroke-width="1"/><path d="M4.5 7.5L1.5 10.5" stroke="#666" stroke-width="1.2"/></svg>
<div class="a" style="left:1895px;top:265px;width:18px;height:768px;background:#ececec;"></div>
<svg style="left:1899px;top:270px" width="9" height="6" viewBox="0 0 9 6"><path d="M.5 5l4-4 4 4" fill="none" stroke="#888" stroke-width="1.2"/></svg>
<div class="a" style="left:1896px;top:530px;width:16px;height:90px;background:#d0d0d0;"></div>
<svg style="left:1899px;top:1021px" width="9" height="6" viewBox="0 0 9 6"><path d="M.5 1l4 4 4-4" fill="none" stroke="#888" stroke-width="1.2"/></svg>
<div class="a" style="left:1263px;top:265px;width:623px;height:561px;background:#fff;border:1px solid #bdbdbd;border-top:none;overflow:hidden"><div class="t" style="left:119px;top:0.2px;height:11.6px;line-height:11.6px;font-size:9.7px;color:#4a4a4a;letter-spacing:.42px">Description: 2019-83758</div>
<div class="t" style="left:119px;top:11.7px;height:11.6px;line-height:11.6px;font-size:9.7px;color:#4a4a4a;letter-spacing:.42px">Currency date: 17-05-2020</div>
<div class="a" style="left:119px;top:34px;width:466px;height:1px;background:#d4d4d4;"></div>
<div class="t" style="left:56px;top:43.2px;height:11.6px;line-height:11.6px;font-size:9.7px;color:#4a4a4a;letter-spacing:.42px">07-05-2022</div>
<div class="t" style="left:119px;top:43.1px;height:11.8px;line-height:11.8px;font-size:9.8px;color:#2a2a2a;-webkit-text-stroke:.15px #2a2a2a;letter-spacing:.2px">LinkedIn</div>
<div class="t" style="left:391px;top:42.9px;height:12.2px;line-height:12.2px;font-size:10.2px;color:#444;font-variant:small-caps;letter-spacing:0.1px">Online Banking</div>
<div class="t" style="right:37px;top:42.5px;height:13px;line-height:13px;font-size:10px;color:#2a2a2a;-webkit-text-stroke:.15px #2a2a2a;letter-spacing:.3px">- 74,98</div><div class="t" style="left:119px;top:55.9px;height:11.6px;line-height:11.6px;font-size:9.7px;color:#4a4a4a;letter-spacing:.42px">Description: 5320984863</div>
<div class="t" style="left:119px;top:68.7px;height:11.6px;line-height:11.6px;font-size:9.7px;color:#3a3a3a;letter-spacing:.42px">IBAN: IE64IRCE92050112345678</div>
<div class="a" style="left:119px;top:101px;width:466px;height:1px;background:#d4d4d4;"></div>
<div class="a" style="left:54px;top:110px;width:58px;height:10px;background:#c3c3fb;"></div>
<div class="t" style="left:56px;top:109.2px;height:11.6px;line-height:11.6px;font-size:9.7px;color:#3a3a3a;letter-spacing:.42px">01-10-2022</div>
<div class="t" style="left:119px;top:109.1px;height:11.8px;line-height:11.8px;font-size:9.8px;color:#2a2a2a;-webkit-text-stroke:.15px #2a2a2a;letter-spacing:.2px">Kodex</div>
<div class="t" style="left:348px;top:108.9px;height:12.2px;line-height:12.2px;font-size:10.2px;color:#444;font-variant:small-caps;letter-spacing:0.1px">Online Banking</div>
<div class="t" style="right:44px;top:108.5px;height:13px;line-height:13px;font-size:10px;color:#2a2a2a;-webkit-text-stroke:.15px #2a2a2a;letter-spacing:.3px">2694,00</div><div class="a" style="left:178px;top:119px;width:60px;height:16px;background:#c3c3fb;"></div>
<div class="t" style="left:119px;top:123.7px;height:11.6px;line-height:11.6px;font-size:9.7px;color:#4a4a4a;letter-spacing:.42px">Description: </div>
<div class="t" style="left:180px;top:121.2px;height:11.6px;line-height:11.6px;font-size:9.7px;color:#3a3a3a;letter-spacing:.42px">1515641XXZ</div>
<div class="t" style="left:121px;top:138.2px;height:11.6px;line-height:11.6px;font-size:9.7px;color:#3a3a3a;letter-spacing:.42px">IBAN:  GB09839304459505</div>
<div class="a" style="left:119px;top:168px;width:466px;height:1px;background:#d4d4d4;"></div>
<div class="t" style="left:56px;top:176.2px;height:11.6px;line-height:11.6px;font-size:9.7px;color:#4a4a4a;letter-spacing:.42px">31-04-2020</div>
<div class="t" style="left:119px;top:176.1px;height:11.8px;line-height:11.8px;font-size:9.8px;color:#2a2a2a;-webkit-text-stroke:.15px #2a2a2a;letter-spacing:.2px">Lukyh Grew</div>
<div class="t" style="left:391px;top:175.9px;height:12.2px;line-height:12.2px;font-size:10.2px;color:#444;font-variant:small-caps;letter-spacing:0.1px">Online Banking</div>
<div class="t" style="right:37px;top:175.5px;height:13px;line-height:13px;font-size:10px;color:#2a2a2a;-webkit-text-stroke:.15px #2a2a2a;letter-spacing:.3px">- 776,50</div><div class="t" style="left:119px;top:189.2px;height:11.6px;line-height:11.6px;font-size:9.7px;color:#4a4a4a;letter-spacing:.42px">Payment ID: 83934KL-29</div>
<div class="t" style="left:119px;top:202.2px;height:11.6px;line-height:11.6px;font-size:9.7px;color:#3a3a3a;letter-spacing:.42px">IBAN: NL88ABNA522886351</div>
<div class="a" style="left:119px;top:240px;width:466px;height:1px;background:#d4d4d4;"></div>
<div class="a" style="left:53px;top:249px;width:57px;height:11px;background:#c3c3fb;"></div>
<div class="t" style="left:54px;top:248.2px;height:11.6px;line-height:11.6px;font-size:9.7px;color:#3a3a3a;letter-spacing:.42px">01-03-2022</div>
<div class="t" style="left:117px;top:248.2px;height:11.5px;line-height:11.5px;font-size:9.6px;color:#333;">Visa Easy Peasy</div>
<div class="t" style="left:399px;top:247.9px;height:12.2px;line-height:12.2px;font-size:10.2px;color:#444;font-variant:small-caps;letter-spacing:0.1px">Online Banking</div>
<div class="t" style="right:44px;top:247.5px;height:13px;line-height:13px;font-size:10px;color:#2a2a2a;-webkit-text-stroke:.15px #2a2a2a;letter-spacing:.3px">5016,00</div><div class="t" style="left:119px;top:261.2px;height:11.6px;line-height:11.6px;font-size:9.7px;color:#4a4a4a;letter-spacing:.42px">Description: </div>
<div class="a" style="left:176px;top:260px;width:63px;height:13px;background:#c3c3fb;"></div>
<div class="t" style="left:178px;top:261.2px;height:11.6px;line-height:11.6px;font-size:9.7px;color:#3a3a3a;letter-spacing:.42px">3434241XXZ</div>
<div class="t" style="left:119px;top:274.2px;height:11.6px;line-height:11.6px;font-size:9.7px;color:#4a4a4a;letter-spacing:.42px">Time: 20:15</div>
<div class="a" style="left:119px;top:299px;width:466px;height:1px;background:#d4d4d4;"></div>
<div class="t" style="left:56px;top:307.2px;height:11.6px;line-height:11.6px;font-size:9.7px;color:#4a4a4a;letter-spacing:.42px">10-04-2020</div>
<div class="t" style="left:119px;top:307.1px;height:11.8px;line-height:11.8px;font-size:9.8px;color:#2a2a2a;-webkit-text-stroke:.15px #2a2a2a;letter-spacing:.2px">Sainsbury´s LOK</div>
<div class="t" style="left:391px;top:306.9px;height:12.2px;line-height:12.2px;font-size:10.2px;color:#444;font-variant:small-caps;letter-spacing:0.1px">Online Banking</div>
<div class="t" style="right:37px;top:306.5px;height:13px;line-height:13px;font-size:10px;color:#2a2a2a;-webkit-text-stroke:.15px #2a2a2a;letter-spacing:.3px">- 7,40</div><div class="t" style="left:119px;top:319.7px;height:11.6px;line-height:11.6px;font-size:9.7px;color:#4a4a4a;letter-spacing:.42px">Description: transaction fee</div>
<div class="t" style="left:121px;top:333.2px;height:11.6px;line-height:11.6px;font-size:9.7px;color:#3a3a3a;letter-spacing:.42px">IBAN:  GB09839304459505</div>
<div class="a" style="left:119px;top:366px;width:466px;height:1px;background:#d4d4d4;"></div>
<div class="a" style="left:54px;top:374px;width:58px;height:11px;background:#c3c3fb;"></div>
<div class="t" style="left:56px;top:373.7px;height:11.6px;line-height:11.6px;font-size:9.7px;color:#3a3a3a;letter-spacing:.42px">24-01-2022</div>
<div class="t" style="left:119px;top:373.6px;height:11.8px;line-height:11.8px;font-size:9.8px;color:#2a2a2a;-webkit-text-stroke:.15px #2a2a2a;letter-spacing:.2px">LinkedIn</div>
<div class="t" style="left:391px;top:373.4px;height:12.2px;line-height:12.2px;font-size:10.2px;color:#444;font-variant:small-caps;letter-spacing:0.1px">Online Banking</div>
<div class="t" style="right:38px;top:373.0px;height:13px;line-height:13px;font-size:10px;color:#2a2a2a;-webkit-text-stroke:.15px #2a2a2a;letter-spacing:.3px">74,98</div><div class="t" style="left:119px;top:386.7px;height:11.6px;line-height:11.6px;font-size:9.7px;color:#4a4a4a;letter-spacing:.42px">Description: </div>
<div class="a" style="left:178px;top:386px;width:63px;height:13px;background:#c3c3fb;"></div>
<div class="t" style="left:179px;top:386.7px;height:11.6px;line-height:11.6px;font-size:9.7px;color:#3a3a3a;letter-spacing:.42px">3434279XXC</div>
<div class="t" style="left:119px;top:399.7px;height:11.6px;line-height:11.6px;font-size:9.7px;color:#3a3a3a;letter-spacing:.42px">IBAN: IE64IRCE92050112345678</div>
</div><div class="a" style="left:1263px;top:848px;width:623px;height:185px;background:#fff;border:1px solid #d0d0d0;border-bottom:none;overflow:hidden"><div class="t" style="left:46px;top:15.2px;height:33.6px;line-height:33.6px;font-size:28px;color:#0f0c6e;font-weight:bold;font-family:'Liberation Serif',serif;letter-spacing:.5px">ING</div>
<svg style="left:106px;top:19px" width="37" height="25" viewBox="0 0 37 25"><path d="M0.5 24Q0 21 3 20.5L6 19.5Q4.5 15 4.5 9Q4.5 1 11 0.5Q17.5 0.5 18.5 7L19.5 10.5Q26 11 28.5 16L29.5 21Q33 19.5 33.5 14Q33.5 8 27 4.5L27.5 3Q35.5 5 36 14Q36 23.5 28 24z" fill="#f47c1f"/><path d="M7.5 4.5h7l-1 5.5l-2.5 2l-2.5-2z" fill="#fad3b0"/><path d="M9 11l2 1 2-1M6 22h4M15 22h4M22 19a2 2 0 1 0 .1 0M13 15a2 2 0 1 0 .1 0" fill="none" stroke="#fbb57a" stroke-width=".9"/></svg>
<div class="t" style="right:74px;top:20.0px;height:14px;line-height:14px;font-size:20px;color:#2a2a2a;">Bank statement</div><svg style="left:565px;top:18px" width="21" height="21" viewBox="0 0 21 21"><rect x=".8" y="8.3" width="19" height="12" rx="1.5" fill="#fff" stroke="#e8604f" stroke-width="1.4"/><circle cx="10.5" cy="6.5" r="5.6" fill="#fff" stroke="#e8604f" stroke-width="1.3"/><path d="M12.5 4.2a2.5 2.5 0 1 0 0 4.6M7.5 6h4M7.5 7.3h4" fill="none" stroke="#e8604f" stroke-width=".9"/><rect x=".8" y="8.3" width="19" height="3" fill="#fff"/><path d="M.8 9.5v10.8h19V9.5" fill="none" stroke="#e8604f" stroke-width="1.4"/><rect x="14" y="12.5" width="5.8" height="4.5" fill="none" stroke="#e8604f" stroke-width="1.2"/></svg>
<div class="t" style="right:37px;top:37.5px;height:14px;line-height:14px;font-size:9.7px;color:#333;letter-spacing:-.1px"><span style="font-variant:small-caps">Question?</span> Call 020 22 888 22</div><div class="a" style="left:47px;top:81px;width:530px;height:1px;background:#555;"></div>
<div class="t" style="left:56px;top:87.8px;height:10.3px;line-height:10.3px;font-size:8.6px;color:#444;">Date</div>
<div class="t" style="left:118px;top:87.8px;height:10.3px;line-height:10.3px;font-size:8.6px;color:#444;"><span style="font-variant:small-caps">Name</span> / Description</div>
<div class="t" style="left:388px;top:87.8px;height:10.3px;line-height:10.3px;font-size:8.6px;color:#444;">Type</div>
<div class="t" style="right:39px;top:86.0px;height:14px;line-height:14px;font-size:8.6px;color:#444;"><span style="font-variant:small-caps">Amount</span> (EUR)</div><div class="t" style="left:56px;top:108.7px;height:11.6px;line-height:11.6px;font-size:9.7px;color:#3a3a3a;letter-spacing:.42px">01-04-2020</div>
<div class="t" style="left:118px;top:108.6px;height:11.8px;line-height:11.8px;font-size:9.8px;color:#2a2a2a;-webkit-text-stroke:.15px #2a2a2a;letter-spacing:.2px">REDFLAG BV</div>
<div class="t" style="left:388px;top:108.1px;height:12.7px;line-height:12.7px;font-size:10.6px;color:#444;font-variant:small-caps">Online Banking</div>
<div class="t" style="right:39px;top:107.5px;height:14px;line-height:14px;font-size:10px;color:#2a2a2a;-webkit-text-stroke:.15px #2a2a2a;letter-spacing:.3px">- 4270,50</div><div class="t" style="left:118px;top:121.2px;height:11.6px;line-height:11.6px;font-size:9.7px;color:#4a4a4a;letter-spacing:.42px">Description: 47209847</div>
<div class="t" style="left:118px;top:133.7px;height:11.6px;line-height:11.6px;font-size:9.7px;color:#3a3a3a;letter-spacing:.42px">IBAN: NL03INGB83746578</div>
<div class="a" style="left:118px;top:168px;width:466px;height:1px;background:#d4d4d4;"></div>
<div class="t" style="left:56px;top:176.2px;height:11.6px;line-height:11.6px;font-size:9.7px;color:#3a3a3a;letter-spacing:.42px">19-02-2022</div>
<div class="t" style="left:118px;top:176.1px;height:11.8px;line-height:11.8px;font-size:9.8px;color:#2a2a2a;-webkit-text-stroke:.15px #2a2a2a;letter-spacing:.2px">GGD Avengers</div>
<div class="t" style="left:398px;top:175.6px;height:12.7px;line-height:12.7px;font-size:10.6px;color:#444;font-variant:small-caps">Online Banking</div>
<div class="t" style="right:39px;top:175.0px;height:14px;line-height:14px;font-size:10px;color:#2a2a2a;-webkit-text-stroke:.15px #2a2a2a;letter-spacing:.3px">- 211,80</div></div><div class="a" style="left:1251px;top:1033px;width:644px;height:17px;background:#ececec;"></div>
<svg style="left:1256px;top:1036px" width="6" height="9" viewBox="0 0 6 9"><path d="M5 .5L1 4.5 5 8.5" fill="none" stroke="#c4c4c4" stroke-width="1.1"/></svg>
<svg style="left:1885px;top:1036px" width="6" height="9" viewBox="0 0 6 9"><path d="M1 .5L5 4.5 1 8.5" fill="none" stroke="#c4c4c4" stroke-width="1.1"/></svg>
<div class="a" style="left:0px;top:1056px;width:1920px;height:21px;background:#f0f0f0;"></div>
<div class="a" style="left:0px;top:1056px;width:1920px;height:1px;background:#dcdcdc;"></div>
<div class="t" style="left:7px;top:1060.9px;height:12.2px;line-height:12.2px;font-size:10.2px;color:#333;">Enter</div>
<svg style="left:52px;top:1060px" width="14" height="14" viewBox="0 0 14 14"><circle cx="7" cy="2.5" r="1.8" fill="none" stroke="#555"/><path d="M2 5h10M7 5v4M4 13l3-4 3 4M3 13l8-8M11 13L3 5" fill="none" stroke="#555" stroke-width="1"/></svg>
<div class="t" style="left:69px;top:1061.2px;height:11.5px;line-height:11.5px;font-size:9.6px;color:#333;">Accessibility: Investigate</div>
<svg style="left:1537px;top:1061px" width="14" height="12" viewBox="0 0 14 12"><rect x=".5" y=".5" width="12" height="8" fill="none" stroke="#444"/><path d="M4 11h5" stroke="#444"/><circle cx="10" cy="9" r="2.5" fill="#fff" stroke="#444"/></svg>
<div class="t" style="left:1553px;top:1061.1px;height:11.8px;line-height:11.8px;font-size:9.8px;color:#333;">Display Settings</div>
<svg style="left:1652px;top:1061px" width="13" height="12" viewBox="0 0 13 12"><path d="M.5.5h12v11H.5zM4.5.5v11M8.5.5v11M.5 4.2h12M.5 7.8h12" fill="none" stroke="#b0b0b0" stroke-width="1"/></svg>
<svg style="left:1690px;top:1061px" width="14" height="12" viewBox="0 0 14 12"><path d="M.5.5h13v11H.5z M3 3h8v6H3zM4 5h6M4 7h6" fill="none" stroke="#b0b0b0"/></svg>
<svg style="left:1727px;top:1061px" width="14" height="12" viewBox="0 0 14 12"><path d="M.5.5h13v11H.5zM3.5 .5v6h7v-6" fill="none" stroke="#b0b0b0"/></svg>
<div class="a" style="left:1758px;top:1067px;width:7px;height:1px;background:#c0c0c0;"></div>
<div class="a" style="left:1770px;top:1066px;width:93px;height:1px;background:#b8b8b8;"></div>
<div class="a" style="left:1816px;top:1062px;width:1px;height:9px;background:#999;"></div>
<div class="t" style="left:1371px;width:1000px;text-align:center;top:1060.4px;height:13.2px;line-height:13.2px;font-size:11px;color:#bbb;">+</div>
<div class="t" style="left:1404px;width:1000px;text-align:center;top:1061.0px;height:12.0px;line-height:12.0px;font-size:10px;color:#c0c0c0;">100%</div>
<div class="a" style="left:245px;top:1076px;width:1295px;height:1px;background:#d5ebdc;"></div>
<div class="a" style="left:1919px;top:42px;width:1px;height:1035px;background:#3c3c3c;"></div>
</body></html>
